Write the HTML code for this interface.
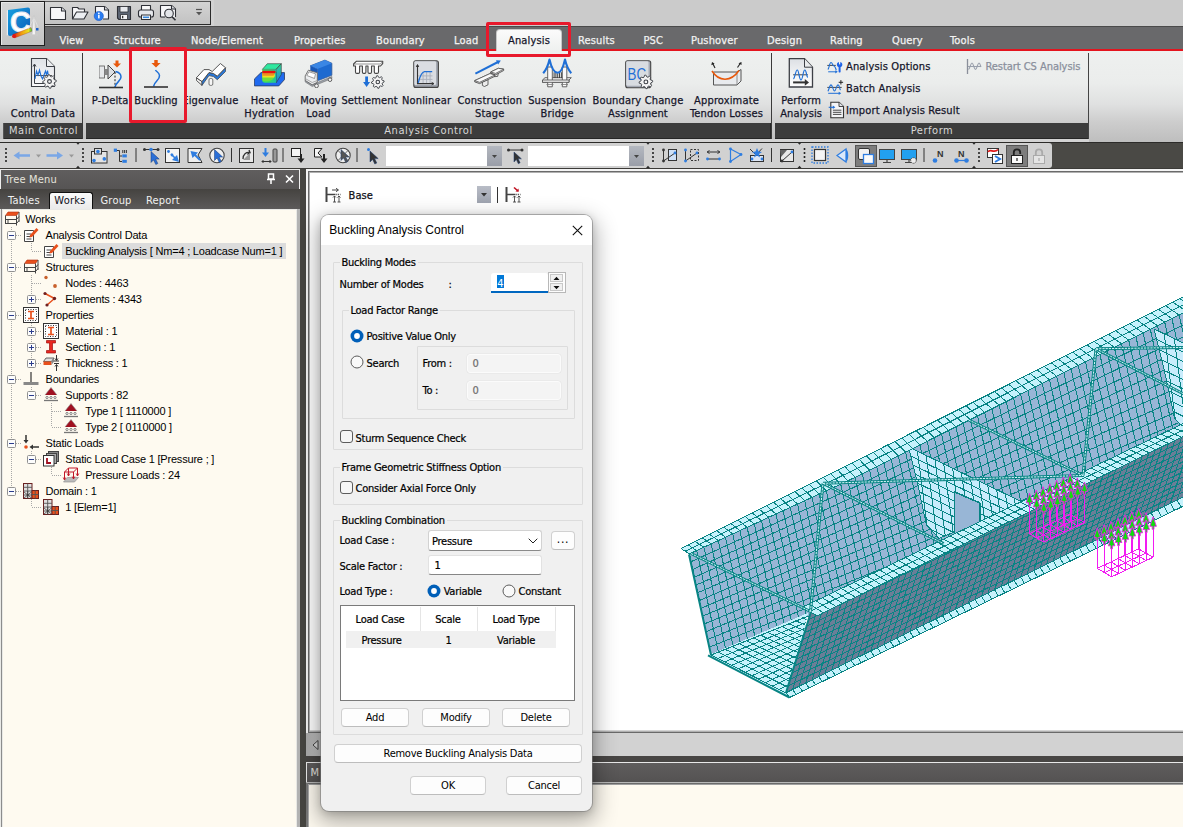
<!DOCTYPE html><html><head><meta charset="utf-8"><title>Buckling Analysis Control</title><style>html,body{margin:0;padding:0;}
body{width:1183px;height:827px;overflow:hidden;background:#cacaca;font-family:"DejaVu Sans Condensed","DejaVu Sans","Liberation Sans",sans-serif;font-size:11px;color:#111;}
#app{position:relative;width:1183px;height:827px;overflow:hidden;}
.abs{position:absolute;}
#app div,#app span,#app svg{position:absolute;box-sizing:border-box;}
.t{white-space:nowrap;line-height:13px;}
.rb{-webkit-text-stroke:0.25px currentColor;font-size:11px;letter-spacing:0.15px;color:#15152a;text-align:center;white-space:nowrap;line-height:13px;}
.tab{-webkit-text-stroke:0.25px currentColor;font-size:11px;letter-spacing:0.15px;color:#f2f2f2;white-space:nowrap;line-height:13px;top:34px;}
.glabel{font-size:11px;letter-spacing:0.55px;color:#d8d8d8;white-space:nowrap;line-height:13px;text-align:center;}
.tr{font-family:"Liberation Sans",sans-serif;font-size:11px;letter-spacing:-0.2px;color:#000;white-space:nowrap;line-height:16px;height:16px;}
.dl{-webkit-text-stroke:0.2px currentColor;font-size:11px;letter-spacing:-0.25px;color:#000;white-space:nowrap;line-height:13px;}
.gb{border:1px solid #dcdcdc;border-radius:1px;}
.gbl{background:#f0f0f0;padding:0 2px;}
.btn{background:#fdfdfd;border:1px solid #d0d0d0;border-bottom-color:#bdbdbd;border-radius:4px;text-align:center;font-size:11px;letter-spacing:-0.25px;color:#000;line-height:16px;}
</style></head><body>
<div id="app">
<div style="left:0;top:0;width:1183px;height:26px;background:#cbcbcb"></div>
<div style="left:0;top:26px;width:1183px;height:23px;background:#69696b;border-top:1px solid #4a4a4a"></div>
<div style="left:44px;top:1px;width:167px;height:24px;background:linear-gradient(#d4d4d4,#c2c2c2);border:1px solid #2a2a2a;border-top-color:#555;border-left:none"></div>
<div style="left:211px;top:0;width:3px;height:26px;background:#d2d2d2"></div>
<div style="left:0;top:1px;width:45px;height:45px;background:linear-gradient(#d6d6d6,#c4c4c4);border:1px solid #1e1e1e;box-shadow:inset 1px 1px 0 #e8e8e8"></div>
<svg style="left:6px;top:7px" width="34" height="32" viewBox="0 0 34 32" ><defs><linearGradient id="glogo" x1="0" y1="0" x2="1" y2="1"><stop offset="0" stop-color="#18a0e0"/><stop offset="1" stop-color="#0c5cb8"/></linearGradient><linearGradient id="gbar" x1="0" y1="0" x2="1" y2="0"><stop offset="0" stop-color="#e01818"/><stop offset="0.45" stop-color="#f0a010"/><stop offset="0.8" stop-color="#e8e020"/><stop offset="1" stop-color="#28b040"/></linearGradient></defs><path d="M2,3 L22,0.5 Q24,0.5 24,2.5 V24 L4,29 Q2,29 2,27 Z" fill="url(#glogo)"/><path d="M0.8,3.5 L2,3 V28 L0.8,28.5 Z" fill="#e8eef4"/><text x="4" y="24.5" font-family="Liberation Sans,sans-serif" font-weight="bold" font-size="29" fill="#fff" stroke="#e4e8f0" stroke-width="1">C</text><path d="M7,27.5 L25,20.5 L26.5,24 L8.5,31 Z" fill="url(#gbar)" stroke="#a02010" stroke-width="0.3"/><circle cx="8" cy="29.2" r="1.9" fill="#e01818"/><path d="M27.5,9 L26,28 H29.5 L28.5,9 Z" fill="#f4f4f4" stroke="#bbb" stroke-width="0.5"/><path d="M24,28 H32" stroke="#ccc" stroke-width="1"/><path d="M27.5,12 L22,22 M28.5,12 L32,20" stroke="#e4e4e4" stroke-width="0.7"/><rect x="30" y="21" width="2.5" height="2.5" fill="#1a60c8"/></svg>
<svg style="left:0px;top:0px" width="215" height="26" viewBox="0 0 215 26" ><g fill="#f7f7f9" stroke="#2e3036" stroke-width="1.1" stroke-linejoin="round"><path d="M50.5,7.5 H61.5 L65.5,11 V19.5 H50.5 Z"/><path d="M61.5,7.5 V11 H65.5" fill="#dfe1e6"/><path d="M72.5,19 V7.5 H77.5 L79,9 H84.5 V12"/><path d="M72.5,19 L76.5,12 H88 L84,19 Z" fill="#eceef2"/><path d="M95.5,17 V6.5 H104.5 L108.5,10 V19 H103"/><path d="M104.5,6.5 V10 H108.5" fill="#dfe1e6"/></g><circle cx="98.8" cy="16" r="4.6" fill="#2a7cf0" stroke="#1858c8" stroke-width="0.6"/><rect x="98.1" y="14.8" width="1.5" height="3.6" fill="#fff"/><circle cx="98.85" cy="13.3" r="0.9" fill="#fff"/><g stroke="#2e3036" stroke-width="1.1" stroke-linejoin="round"><path d="M117.5,6.5 H130.5 V19.5 H119 L117.5,18 Z" fill="#5d6675"/><rect x="120" y="6.5" width="8" height="5.5" fill="#e8eaee" stroke-width="0.8"/><rect x="120.5" y="14.5" width="7" height="5" fill="#f4f4f6" stroke-width="0.8"/><rect x="122" y="15.8" width="1.3" height="2.5" fill="#333" stroke="none"/><path d="M141.5,10 V5.5 H150.5 V10" fill="#fafafa"/><rect x="138.5" y="10" width="15" height="7" rx="2" fill="#e6e8ec"/><path d="M141.5,15 H150.5 V19.5 H141.5 Z" fill="#fafafa"/><path d="M143,17.3 H149" stroke="#3a8ae0" stroke-width="1.6"/><path d="M160.5,17 V5.5 H171.5 L175.5,9 V17" fill="#f7f7f9"/><path d="M160.5,17 H165" /><path d="M171.5,5.5 V9 H175.5" fill="#dfe1e6"/><circle cx="169" cy="13.5" r="4.3" fill="#e4e6ea"/><path d="M172,16.8 L175.5,20.3" stroke-width="1.6"/></g><path d="M196,9.5 H202" stroke="#555" stroke-width="1.2"/><path d="M196,12 H202 L199,15.2 Z" fill="#555"/></svg>
<span class="tab" style="left:59.5px">View</span>
<span class="tab" style="left:113.5px">Structure</span>
<span class="tab" style="left:191px">Node/Element</span>
<span class="tab" style="left:294px">Properties</span>
<span class="tab" style="left:376px">Boundary</span>
<span class="tab" style="left:454px">Load</span>
<span class="tab" style="left:578px">Results</span>
<span class="tab" style="left:643.5px">PSC</span>
<span class="tab" style="left:691px">Pushover</span>
<span class="tab" style="left:767px">Design</span>
<span class="tab" style="left:830px">Rating</span>
<span class="tab" style="left:892px">Query</span>
<span class="tab" style="left:950px">Tools</span>
<div style="left:0;top:49px;width:1183px;height:2px;background:#e4141e"></div>
<div style="left:0;top:51px;width:1183px;height:91px;background:linear-gradient(#eef0ef 0%,#ebedec 35%,#e0e1e1 58%,#cdcdcd 78%,#bebebe 100%)"></div>
<div style="left:0;top:141.500px;width:1183px;height:1.200px;background:#2c2b29"></div>
<div style="left:496px;top:29px;width:66px;height:22px;background:linear-gradient(#fbfbfb,#eef0ef);border:1px solid #c8c8c8;border-bottom:none;border-radius:4px 4px 0 0"></div>
<span class="tab" style="left:508px;color:#15152a">Analysis</span>
<div style="left:0;top:139px;width:1089px;height:2.500px;background:#d3d3d3"></div>
<div style="left:4px;top:123px;width:79px;height:16px;background:#3c3c3c;border-bottom:1px solid #262626;border-right:1px solid #262626"></div>
<div style="left:86px;top:123px;width:685px;height:16px;background:#3c3c3c;border-bottom:1px solid #262626;border-right:1px solid #262626"></div>
<div style="left:775px;top:123px;width:314px;height:16px;background:#3c3c3c;border-bottom:1px solid #262626;border-right:1px solid #262626"></div>
<div style="left:82px;top:53px;width:1px;height:86px;background:#3a3a3a"></div>
<div style="left:771px;top:53px;width:1px;height:86px;background:#3a3a3a"></div>
<div style="left:1088px;top:53px;width:1px;height:86px;background:#444"></div>
<div style="left:3px;top:123px;width:1px;height:16px;background:#555"></div>
<span class="glabel" style="left:4px;top:124px;width:79px">Main Control</span>
<span class="glabel" style="left:86px;top:124px;width:685px">Analysis Control</span>
<span class="glabel" style="left:775px;top:124px;width:314px">Perform</span>
<span class="rb" style="left:-17px;top:94px;width:120px">Main</span>
<span class="rb" style="left:-17px;top:107px;width:120px">Control Data</span>
<svg style="left:30px;top:56.5px" width="28" height="32" viewBox="0 0 28 32" ><defs><linearGradient id="gdoc" x1="0" y1="0" x2="0" y2="1"><stop offset="0" stop-color="#dfe2e6"/><stop offset="1" stop-color="#fbfbfc"/></linearGradient></defs><path d="M1.5,1.5 H16.5 L24.5,9.5 V29.5 H1.5 Z" fill="url(#gdoc)" stroke="#3c3f45" stroke-width="1.1"/><path d="M16.5,1.5 V9.5 H24.5" fill="#eceef0" stroke="#3c3f45" stroke-width="1"/><path d="M4.5,8 V26.5 H14" fill="none" stroke="#3c3f45" stroke-width="1"/><path d="M3,9.5 L4.5,7 L6,9.5" fill="none" stroke="#3c3f45"/><path d="M5,18.5 H22" stroke="#555" stroke-width="1"/><path d="M5,22 L6.5,14 L8,18 L9.5,13 L11,19 L12.5,22 L14,18 L15.5,14 L16.5,18 L17.5,13.5 L18.5,19" fill="none" stroke="#1f6fd6" stroke-width="1.1"/><polygon points="26.17,23.17 26.30,24.50 24.44,25.48 24.15,26.43 25.15,28.28 24.31,29.31 22.30,28.68 21.43,29.15 20.83,31.17 19.50,31.30 18.52,29.44 17.57,29.15 15.72,30.15 14.69,29.31 15.32,27.30 14.85,26.43 12.83,25.83 12.70,24.50 14.56,23.52 14.85,22.57 13.85,20.72 14.69,19.69 16.70,20.32 17.57,19.85 18.17,17.83 19.50,17.70 20.48,19.56 21.43,19.85 23.28,18.85 24.31,19.69 23.68,21.70 24.15,22.57" fill="#f4f4f4" stroke="#3c3f45" stroke-width="0.9"/><circle cx="19.5" cy="24.5" r="1.904" fill="none" stroke="#3c3f45" stroke-width="1.1"/></svg>
<span class="rb" style="left:50.2px;top:94px;width:120px">P-Delta</span>
<svg style="left:99px;top:59.5px" width="24" height="29" viewBox="0 0 24 29" ><rect x="0" y="6" width="5.5" height="12" fill="#e6e8ea" stroke="#555" stroke-width="0.8"/><rect x="5.5" y="9" width="3" height="6" fill="#888"/><path d="M9,5 L16,12 L9,19 Z" fill="#dcdfe2" stroke="#444" stroke-width="1"/><path d="M16.5,0.5 h3 v3 h2.5 l-4,4 l-4,-4 h2.5 z" fill="#e8590c"/><path d="M16,12 V27" stroke="#222" stroke-width="1" stroke-dasharray="2,1.6"/><path d="M16,27 C17,22 22,21 22,17 C22,13 19,12 16.5,11.5" fill="none" stroke="#1f6fd6" stroke-width="1.5"/><path d="M0,27.5 H24" stroke="#333" stroke-width="1.6"/></svg>
<span class="rb" style="left:96px;top:94px;width:120px">Buckling</span>
<svg style="left:144px;top:59.5px" width="24" height="29" viewBox="0 0 24 29" ><path d="M10.275,-0.5 h3.45 v3.45 h2.875 l-4.6,4.6 l-4.6,-4.6 h2.875 z" fill="#e8590c"/><path d="M9.5,26.5 C10.5,21 16,20 15.5,15.5 C15,12 12.5,12 11.5,10" fill="none" stroke="#1f6fd6" stroke-width="1.5"/><path d="M0,27 H24" stroke="#333" stroke-width="1.6"/></svg>
<div style="left:186.500px;top:94px;width:52px;height:14px;overflow:hidden"><span class="rb" style="right:0;top:0">Eigenvalue</span></div>
<svg style="left:196px;top:63px" width="31" height="23" viewBox="0 0 31 23" ><path d="M0.4,14.8 V17.4 L6,22.4 V18.5 Z" fill="#f4f4f4" stroke="#444" stroke-width="0.9"/><path d="M6,18.5 L13,9.5 L17.5,10.5 L21.3,13.2 L29.5,4.7 V8.5 L21.3,16.7 L17.5,13.6 L13,12.6 L6,22.4 Z" fill="#2a78d8" stroke="#444" stroke-width="0.7"/><rect x="13" y="15.5" width="3.8" height="6.9" rx="1.4" fill="#f6f6f6" stroke="#555" stroke-width="0.8"/><path d="M0.4,14.8 L7.9,6.6 L13,6.6 L16.2,8.5 L24.4,0.5 L29.5,4.7 L21.3,13.2 L17.5,10.5 L13,9.5 L6,18.5 Z" fill="#fff" stroke="#444" stroke-width="0.9"/></svg>
<span class="rb" style="left:209.3px;top:94px;width:120px">Heat of</span>
<span class="rb" style="left:209.3px;top:107px;width:120px">Hydration</span>
<svg style="left:254px;top:62.5px" width="31" height="24" viewBox="0 0 31 24" ><defs><linearGradient id="gheat" x1="0" y1="0" x2="1" y2="0"><stop offset="0" stop-color="#38e060"/><stop offset="0.6" stop-color="#30d870"/><stop offset="1" stop-color="#20c0a0"/></linearGradient><linearGradient id="gheat2" x1="0" y1="0" x2="0" y2="1"><stop offset="0" stop-color="#30d890"/><stop offset="1" stop-color="#2080e0"/></linearGradient></defs><path d="M0.4,16 L7,9.6 H30.5 V16.6 L24.8,22.9 H0.4 Z" fill="#1f6af0" stroke="#2a3a60" stroke-width="0.8"/><path d="M8.3,6.4 L13.3,0.7 H27.3 L22.2,6.4 Z" fill="#30e8a0" stroke="#333" stroke-width="0.6"/><path d="M22.2,6.4 L27.3,0.7 V11.5 L22.2,19.8 Z" fill="url(#gheat2)" stroke="#333" stroke-width="0.6"/><path d="M8.3,6.4 H22.2 V19.8 H11 Q8.3,19.8 8.3,17 Z" fill="url(#gheat)"/><path d="M8.3,10.2 H20.5 Q21.5,12.5 20,14.7 H8.3 Z" fill="#f0e020"/><path d="M8.3,10.2 H20 Q20.5,11.5 19.500,12.700 H8.3 Z" fill="#f09020"/><path d="M8.3,7.7 H21.2 Q22.2,9 21.2,10.2 H8.3 Z" fill="#e81010"/><path d="M8.3,14.7 H20 Q18,18 12,18.500 L8.300,17.500 Z" fill="#80e030" opacity="0.8"/></svg>
<span class="rb" style="left:258.5px;top:94px;width:120px">Moving</span>
<span class="rb" style="left:258.5px;top:107px;width:120px">Load</span>
<svg style="left:303.5px;top:59px" width="30" height="29" viewBox="0 0 30 29" ><path d="M1.2,21 L8.2,25.5 L14.6,23 L27.9,17.500 V19.500 L14.600,25 L8.200,27.500 L1.200,23 Z" fill="#9aa0a8" stroke="#666" stroke-width="0.500"/><path d="M6.3,6.8 L20.9,1.1 L27.9,4.2 V16.3 L14.6,21.4 L13.3,21 V9.9 Z" fill="#1d6ad0" stroke="#3a5a90" stroke-width="0.700"/><path d="M6.3,6.8 L20.9,1.1 L27.9,4.2 L13.3,9.9 Z" fill="#3a86e4"/><path d="M6.3,6.8 L13.3,9.9 V14 L6.300,12 Z" fill="#1858b8"/><path d="M1.2,16.9 L4.4,11.2 L13.3,13.8 V23.3 L8.2,25.8 L1.2,21.4 Z" fill="#eceef0" stroke="#666" stroke-width="0.900"/><path d="M2.800,16.500 L5,12.800 L11.500,14.800 L10.500,19.500 Z" fill="#fff" stroke="#777" stroke-width="0.700"/><path d="M1.200,19.500 L8.200,23.500 L13.300,21.500" fill="none" stroke="#999" stroke-width="0.800"/><circle cx="12.500" cy="26.800" r="1.900" fill="#f4f4f4" stroke="#555" stroke-width="0.900"/><circle cx="26" cy="20.700" r="1.800" fill="#f4f4f4" stroke="#555" stroke-width="0.900"/></svg>
<span class="rb" style="left:309.6px;top:94px;width:120px">Settlement</span>
<svg style="left:353px;top:59.5px" width="32" height="29" viewBox="0 0 32 29" ><path d="M0.6,4 L3.5,1.2 H29.7 V3.6 L27.5,6 H25.5 V12 Q25.5,13.4 24,13.4 H22.800 Q21.300,13.400 21.300,12 V6 H18.500 V12 Q18.500,13.400 17.200,13.400 H16.300 Q15,13.400 15,12 V6 H12.900 V12 Q12.900,13.400 11.600,13.400 H10.700 Q9.400,13.400 9.400,12 V6 H6.600 V12 Q6.600,13.400 5.300,13.400 H3.800 Q2.500,13.400 2.500,12 V6 H0.600 Z" fill="#fff" stroke="#444" stroke-width="1.1" stroke-linejoin="round"/><path d="M0.600,4 H27.500 L29.700,1.400" fill="none" stroke="#666" stroke-width="0.700"/><path d="M12.200,16.400 h2.800 v5.500 h2.100 l-3.500,5 l-3.500,-5 h2.100 z" fill="#1f6fd6"/><polygon points="30.98,20.77 31.10,22.00 29.37,22.91 29.11,23.78 30.04,25.50 29.25,26.45 27.39,25.88 26.58,26.31 26.03,28.18 24.80,28.30 23.89,26.57 23.02,26.31 21.30,27.24 20.35,26.45 20.92,24.59 20.49,23.78 18.62,23.23 18.50,22.00 20.23,21.09 20.49,20.22 19.56,18.50 20.35,17.55 22.21,18.12 23.02,17.69 23.57,15.82 24.80,15.70 25.71,17.43 26.58,17.69 28.30,16.76 29.25,17.55 28.68,19.41 29.11,20.22" fill="#f4f4f4" stroke="#3c3f45" stroke-width="0.9"/><circle cx="24.8" cy="22" r="1.764" fill="none" stroke="#3c3f45" stroke-width="1.1"/></svg>
<span class="rb" style="left:366.6px;top:94px;width:120px">Nonlinear</span>
<svg style="left:413px;top:60px" width="26" height="28" viewBox="0 0 26 28" ><rect x="0.8" y="0.8" width="24.6" height="26.6" rx="2" fill="#9ea3ad" stroke="#444" stroke-width="1.1"/><rect x="1.300" y="1.300" width="21.800" height="23.800" rx="1.300" fill="#dadde2"/><path d="M10.1,11.700 V23.600 M13.600,11.700 V23.600 M17.100,11.700 V23.600 M4.500,15.900 H19.500 M4.500,19.400 H19.500" stroke="#aab0bc" stroke-width="0.900"/><path d="M4.500,5 V23.600 H20.600" fill="none" stroke="#333" stroke-width="1.100"/><path d="M3.200,7 L4.500,4.500 L5.800,7 M18.600,22.300 L21,23.600 L18.600,24.900" fill="none" stroke="#333" stroke-width="0.900"/><path d="M5.200,22.900 C7,16 8.500,12 11.500,11.700 H19.200" fill="none" stroke="#1f6fd6" stroke-width="1.300"/></svg>
<span class="rb" style="left:429.8px;top:94px;width:120px">Construction</span>
<span class="rb" style="left:429.8px;top:107px;width:120px">Stage</span>
<svg style="left:474px;top:59.5px" width="31" height="27" viewBox="0 0 31 27" ><path d="M1.400,13.600 L24,2" stroke="#1f6fd6" stroke-width="2"/><path d="M22,0.300 L26.800,0.600 L24.200,4.500 Z" fill="#1f6fd6"/><path d="M19.500,14.300 L24.400,12.900 L23.700,16.400 L20.200,16.700 Z" fill="#e8e8e8" stroke="#444" stroke-width="0.800"/><path d="M16.700,12 L24.400,8.300 L29.700,9.200 V10.500 L21.600,14.800 L16.700,13.200 Z" fill="#dcdcdc" stroke="#444" stroke-width="0.800"/><path d="M16.700,12 L24.400,8.300 L29.700,9.200 L21.600,13.400 Z" fill="#fafafa" stroke="#444" stroke-width="0.700"/><path d="M8.400,22 L14,19.500 V24.800 L10.500,26.500 L8.400,25.500 Z" fill="#ececec" stroke="#444" stroke-width="0.800"/><path d="M0.700,20.600 L16,13.600 L20.900,15 V16.300 L5.600,23.600 L0.700,21.900 Z" fill="#dcdcdc" stroke="#444" stroke-width="0.800"/><path d="M0.700,20.600 L16,13.600 L20.900,15 L5.600,22.300 Z" fill="#fafafa" stroke="#444" stroke-width="0.700"/></svg>
<span class="rb" style="left:497.2px;top:94px;width:120px">Suspension</span>
<span class="rb" style="left:497.2px;top:107px;width:120px">Bridge</span>
<svg style="left:542px;top:58px" width="30" height="30" viewBox="0 0 30 30" ><path d="M0.500,22 L3,19.700 H29.300 L27,22 V24.300 H0.500 Z" fill="#f2f2f2" stroke="#555" stroke-width="0.900"/><path d="M12.100,14.300 V20 M13.900,15 V20 M15.700,15.300 V20 M17.500,15 V20 M19.400,14.300 V20" stroke="#333" stroke-width="0.900"/><path d="M5.700,9 H10.300 V28.800 H5.700 Z M20.300,9 H24.800 V28.800 H20.300 Z" fill="#fafafa" stroke="#555" stroke-width="0.900"/><path d="M0.500,22 H27 V24.300 H0.500 Z" fill="#f6f6f6" stroke="#555" stroke-width="0.900"/><path d="M4.500,26.500 H11.500 M19,26.500 H26" stroke="#777" stroke-width="0.800"/><path d="M1.200,15.200 C4,12 6.500,6 7.500,1.500 C9,8 11.500,14.800 15.700,14.800 C19.500,14.800 21.500,8 23,1.500 C24,6 26.500,12 29.300,15.200" fill="none" stroke="#1f6fd6" stroke-width="2.100" stroke-linejoin="round"/></svg>
<span class="rb" style="left:578px;top:94px;width:120px">Boundary Change</span>
<span class="rb" style="left:578px;top:107px;width:120px">Assignment</span>
<svg style="left:625px;top:60px" width="29" height="30" viewBox="0 0 29 30" ><rect x="0.700" y="0.700" width="25" height="27" rx="2" fill="#a4a9b3" stroke="#444" stroke-width="1.100"/><rect x="1.200" y="1.200" width="22.300" height="24.500" rx="1.300" fill="#d8dce1"/><text x="2.500" y="19.600" font-family="Liberation Sans,sans-serif" font-size="16.500" textLength="18.500" lengthAdjust="spacingAndGlyphs" fill="#1f6fd6">BC</text><polygon points="27.57,20.57 27.70,21.90 25.84,22.88 25.55,23.83 26.55,25.68 25.71,26.71 23.70,26.08 22.83,26.55 22.23,28.57 20.90,28.70 19.92,26.84 18.97,26.55 17.12,27.55 16.09,26.71 16.72,24.70 16.25,23.83 14.23,23.23 14.10,21.90 15.96,20.92 16.25,19.97 15.25,18.12 16.09,17.09 18.10,17.72 18.97,17.25 19.57,15.23 20.90,15.10 21.88,16.96 22.83,17.25 24.68,16.25 25.71,17.09 25.08,19.10 25.55,19.97" fill="#f4f4f4" stroke="#3c3f45" stroke-width="0.9"/><circle cx="20.9" cy="21.9" r="1.904" fill="none" stroke="#3c3f45" stroke-width="1.1"/></svg>
<span class="rb" style="left:666.5px;top:94px;width:120px">Approximate</span>
<span class="rb" style="left:666.5px;top:107px;width:120px">Tendon Losses</span>
<svg style="left:711px;top:62px" width="32" height="24" viewBox="0 0 32 24" ><path d="M2.5,10 H26 L30,7.5 V19 L26,23 H2.5 Z" fill="#e9ebee" stroke="#555" stroke-width="1"/><path d="M26,10 V23" stroke="#777" stroke-width="0.8"/><path d="M1,9 C8,20 20,20 28,8.5" fill="none" stroke="#e8590c" stroke-width="1.6"/><path d="M4,6 L1.5,1" stroke="#222" stroke-width="1.1"/><path d="M0.3,3.3 L1,0 L3.6,1.8 Z" fill="#222"/><path d="M26.5,5.5 L29.5,1" stroke="#222" stroke-width="1.1"/><path d="M27.5,1.2 L30.5,0 L30.5,3 Z" fill="#222"/></svg>
<span class="rb" style="left:741.2px;top:94px;width:120px">Perform</span>
<span class="rb" style="left:741.2px;top:107px;width:120px">Analysis</span>
<svg style="left:788px;top:57.5px" width="26" height="30" viewBox="0 0 26 30" ><defs><linearGradient id="gdoc2" x1="0" y1="0" x2="0" y2="1"><stop offset="0" stop-color="#dcdfe4"/><stop offset="0.600" stop-color="#f4f5f6"/><stop offset="1" stop-color="#fcfcfc"/></linearGradient></defs><path d="M1.300,0.700 H16.500 L24.500,9.200 V29 H1.300 Z" fill="url(#gdoc2)" stroke="#3c3f45" stroke-width="1.300"/><path d="M16.500,0.700 V9.200 H24.500" fill="#e8eaec" stroke="#3c3f45" stroke-width="1"/><path d="M5.100,16.800 H19.900" stroke="#333" stroke-width="0.900"/><path d="M5.500,21 C7,20 7.500,12 9.300,12 C11,12 11,22 13,22 C14.800,22 15,12 16.800,12 C18.500,12 18.500,19 19.800,19.500" fill="none" stroke="#1f6fd6" stroke-width="1.200"/><path d="M5.100,24.400 H18" stroke="#333" stroke-width="2"/><path d="M16.800,21 L21,24.400 L16.800,27.800 Z" fill="#333"/></svg>
<svg style="left:826px;top:57px" width="18" height="18" viewBox="0 0 18 18" ><path d="M1.300,8.400 H9.800" stroke="#333" stroke-width="0.900"/><path d="M1.800,12.600 C3,12 3.500,5.500 5,5.500 C6.500,5.500 6.500,9 8,9 C9.500,9 9.500,12.500 10.500,13" fill="none" stroke="#1f6fd6" stroke-width="1.100"/><path d="M2.200,14.800 H10" stroke="#1f6fd6" stroke-width="1"/><path d="M9.300,13.200 L11.800,14.800 L9.300,16.400 Z" fill="#1f6fd6"/><circle cx="13.600" cy="7.600" r="2.700" fill="#1f63e8"/><rect x="12.600" y="8" width="2" height="7.400" rx="0.600" fill="#1f63e8"/><rect x="13" y="4.600" width="1.200" height="2.800" fill="#eef0ef"/></svg>
<span class="rb" style="left:846px;top:60px;text-align:left">Analysis Options</span>
<svg style="left:826px;top:78px" width="18" height="18" viewBox="0 0 18 18" ><path d="M1.300,9.400 H15.700" stroke="#333" stroke-width="0.900"/><path d="M1.800,13.200 C3,12.500 3.500,6.900 5,6.900 C6.500,6.900 7,13 8.500,13 C10,13 10.500,6.900 12,6.900 C13.500,6.900 13.500,11 14.500,12" fill="none" stroke="#1f6fd6" stroke-width="1.100"/><path d="M12.700,4.300 h4.400 M14.900,2.100 v4.400" stroke="#222" stroke-width="1"/><path d="M2.200,15.300 H13.500" stroke="#1f6fd6" stroke-width="1"/><path d="M12.700,13.700 L15.200,15.300 L12.700,16.900Z" fill="#1f6fd6"/></svg>
<span class="rb" style="left:846px;top:81.5px;text-align:left">Batch Analysis</span>
<svg style="left:826.5px;top:100px" width="18" height="19" viewBox="0 0 18 19" ><path d="M3.800,2.200 H12 L16.500,6.500 V17.800 H3.800 Z" fill="#f4f5f7" stroke="#333" stroke-width="1.100"/><path d="M12,2.200 V6.500 H16.500" fill="#e2e4e8" stroke="#333" stroke-width="0.900"/><path d="M5.900,10.200 H14.400 M5.900,12.300 H14.400 M5.900,14.400 H14.400" stroke="#333" stroke-width="0.900"/><path d="M1.700,7.300 H6.500" stroke="#1f6fd6" stroke-width="1.100"/><path d="M5.800,5.500 L8.300,7.300 L5.800,9.100 Z" fill="#1f6fd6"/></svg>
<span class="rb" style="left:846px;top:103.5px;text-align:left">Import Analysis Result</span>
<svg style="left:966px;top:57px" width="18" height="18" viewBox="0 0 18 18" ><path d="M1.500,2 V17" stroke="#8a8f9a" stroke-width="1.300"/><path d="M2,9.500 H15" stroke="#9aa0ac" stroke-width="1"/><path d="M2.500,12.500 C4,12 4.500,6 6,6 C7.500,6 8,12.500 9.500,12.500 C11,12.500 11.500,6 13,6 C14,6 14.500,9 15,10" fill="none" stroke="#9aa0ac" stroke-width="1.100"/></svg>
<span class="rb" style="left:985.500px;top:60px;text-align:left;letter-spacing:-0.050px;color:#8a8f9c">Restart CS Analysis</span>
<div style="left:485.500px;top:22px;width:85.500px;height:34.500px;border:3.2px solid #e8192c;border-radius:2px"></div>
<div style="left:128.5px;top:47px;width:58.5px;height:76px;border:3.2px solid #e8192c;border-radius:2px"></div>
<div style="left:0;top:142.500px;width:1183px;height:25.500px;background:#4a4945"></div>
<div style="left:0;top:142.500px;width:1052px;height:25.500px;background:#d1d1d1;border-radius:0 3px 3px 0"></div>
<div style="left:0;top:168px;width:1183px;height:1px;background:#3c3b38"></div>
<div style="left:0;top:169px;width:1183px;height:1px;background:#e8e8e8"></div>
<div style="left:386px;top:146px;width:116px;height:20px;background:#fff"></div>
<div style="left:487px;top:146px;width:15px;height:20px;background:linear-gradient(#b4b8c0,#9a9ea8)"></div>
<div style="left:528px;top:146px;width:116px;height:20px;background:#fff"></div>
<div style="left:629px;top:146px;width:15px;height:20px;background:linear-gradient(#b4b8c0,#9a9ea8)"></div>
<div style="left:855px;top:145px;width:22px;height:22px;background:#7d7d7d;border:1px solid #555"></div>
<div style="left:1006px;top:145px;width:22px;height:22px;background:#7d7d7d;border:1px solid #555"></div>
<svg style="left:0px;top:140px" width="1183" height="30" viewBox="0 140 1183 30" ><path d="M6,148 v2 M6,152 v2 M6,156 v2 M6,160 v2" stroke="#222" stroke-width="1.6"/><path d="M83,148 v2 M83,152 v2 M83,156 v2 M83,160 v2" stroke="#222" stroke-width="1.6"/><path d="M653,148 v2 M653,152 v2 M653,156 v2 M653,160 v2" stroke="#222" stroke-width="1.6"/><path d="M804.5,148 v2 M804.5,152 v2 M804.5,156 v2 M804.5,160 v2" stroke="#222" stroke-width="1.6"/><path d="M979,148 v2 M979,152 v2 M979,156 v2 M979,160 v2" stroke="#222" stroke-width="1.6"/><path d="M76,142.500 h4 l-2,2.200 z M76,168 h4 l-2,-2.200 z" fill="#2a2a2a"/><path d="M646,142.500 h4 l-2,2.200 z M646,168 h4 l-2,-2.200 z" fill="#2a2a2a"/><path d="M797.5,142.500 h4 l-2,2.200 z M797.5,168 h4 l-2,-2.200 z" fill="#2a2a2a"/><path d="M972,142.500 h4 l-2,2.200 z M972,168 h4 l-2,-2.200 z" fill="#2a2a2a"/><path d="M136,148 V162" stroke="#333" stroke-width="1"/><path d="M231.5,148 V162" stroke="#333" stroke-width="1"/><path d="M283,148 V162" stroke="#333" stroke-width="1"/><path d="M357,148 V162" stroke="#333" stroke-width="1"/><path d="M771.5,148 V162" stroke="#333" stroke-width="1"/><path d="M924,148 V162" stroke="#333" stroke-width="1"/><path d="M13.500,155.500 L19.500,151.500 V154.200 H30 V156.800 H19.500 V159.500 Z" fill="#7aa7e6"/><path d="M36,154.5 h5 l-2.5,3 z" fill="#999"/><path d="M63,155.500 L57,151.500 V154.200 H46.500 V156.800 H57 V159.500 Z" fill="#7aa7e6"/><path d="M69,154.5 h5 l-2.5,3 z" fill="#999"/><rect x="91.500" y="151.500" width="15.500" height="11.500" fill="#e4e4e4" stroke="#333"/><rect x="94.500" y="148.500" width="7" height="5.500" fill="#dcdcdc" stroke="#333"/><circle cx="97.900" cy="151.600" r="1.800" fill="#2f7de0"/><circle cx="94" cy="160.600" r="1.800" fill="#2f7de0"/><circle cx="104.300" cy="158.900" r="1.800" fill="#2f7de0"/><path d="M117,150.500 H119.500 V161.500 H122 M119.500,156 H122" stroke="#333" fill="none"/><rect x="113.800" y="148.600" width="3.200" height="3.200" fill="#2f7de0"/><path d="M122.800,150 v3 M124.600,150 v3 M126.400,150 v3" stroke="#222" stroke-width="0.900"/><rect x="122.300" y="154.400" width="4.500" height="3" fill="#2f7de0"/><rect x="122.300" y="159.800" width="4.500" height="3" fill="#2f7de0"/><path d="M144,149.5 H158" stroke="#333"/><circle cx="144.5" cy="149.5" r="1.5" fill="#333"/><circle cx="158" cy="149.5" r="1.5" fill="#333"/><circle cx="151" cy="149.5" r="1.8" fill="#2f7de0"/><path d="M151,151.5 l0,11 l2.6,-2.6 l2.2,4.6 l2,-1 l-2.2,-4.4 l3.6,0 z" fill="#2a6fd8" stroke="#1a3a70" stroke-width="0.5"/><rect x="165.5" y="148.5" width="14" height="14" fill="#f4f4f4" stroke="#333"/><circle cx="168.5" cy="151.5" r="1.4" fill="#2f7de0"/><circle cx="172" cy="155" r="1.4" fill="#2f7de0"/><path d="M179,162 L172,160 L177,155 Z" fill="#2f7de0"/><path d="M171,154 L177,160" stroke="#2f7de0" stroke-width="1.6"/><path d="M188,148.5 H202 L198,155 L202,162.5 H188 Z" fill="#eee" stroke="#333"/><path d="M190.5,151 L198,152.5 L192.5,158 Z" fill="#2f7de0"/><path d="M194,154 L200,160" stroke="#2f7de0" stroke-width="2"/><circle cx="217" cy="155.5" r="7.2" fill="#f0f0f0" stroke="#444" stroke-width="1.1"/><path d="M214.5,149.5 l0,11 l2.6,-2.6 l2.2,4.6 l2,-1 l-2.2,-4.4 l3.6,0 z" fill="#2a6fd8" stroke="#1a3a70" stroke-width="0.5"/><rect x="239.5" y="148.5" width="14" height="14" fill="#e8e8e8" stroke="#333"/><path d="M243,159 C243,154 246,152 250,152.5 L249,150 M250,152.5 L247.5,154.5" fill="none" stroke="#333" stroke-width="1.3"/><path d="M243,160 L250,153 V160 Z" fill="#999"/><path d="M265.5,148 V153" stroke="#2f7de0" stroke-width="2"/><path d="M262,152.5 H269 L265.5,157 Z" fill="#2f7de0"/><rect x="273" y="149" width="4" height="13" rx="1" fill="#999" stroke="#444"/><path d="M262,161.5 H271" stroke="#333"/><path d="M263.5,160 L262,161.5 L263.5,163 M269.5,160 L271,161.5 L269.5,163" stroke="#333" fill="none"/><rect x="291.5" y="148.500" width="9" height="8" fill="#f4f4f4" stroke="#222"/><path d="M301,154 V160" stroke="#222" stroke-width="2"/><path d="M297.5,158.5 H304.5 L301,163 Z" fill="#222"/><path d="M314.500,148.500 H322 L318,153 L322,157 H314.500 Z" fill="#f4f4f4" stroke="#222"/><path d="M324,154 V160" stroke="#222" stroke-width="2"/><path d="M320.5,158.5 H327.5 L324,163 Z" fill="#222"/><circle cx="343" cy="155.500" r="7.200" fill="#eee" stroke="#444" stroke-width="1.1"/><path d="M338,150.5 L348,160.5 M348,150.5 L338,160.5" stroke="#555" stroke-width="0.9"/><path d="M341,149.5 l0,11 l2.6,-2.6 l2.2,4.6 l2,-1 l-2.2,-4.4 l3.6,0 z" fill="#555" stroke="#1a3a70" stroke-width="0.5"/><circle cx="368.5" cy="149.5" r="1.500" fill="#2f7de0"/><path d="M370,151 l0,11 l2.6,-2.6 l2.2,4.6 l2,-1 l-2.2,-4.4 l3.6,0 z" fill="#333" stroke="#1a3a70" stroke-width="0.5"/><path d="M508,150 H522" stroke="#333"/><circle cx="508.500" cy="150" r="1.500" fill="#333"/><circle cx="522" cy="150" r="1.500" fill="#333"/><path d="M514,152 l0,9.9 l2.34,-2.34 l1.98,4.14 l1.8,-0.9 l-1.98,-3.96 l3.24,0 z" fill="#333" stroke="#1a3a70" stroke-width="0.5"/><path d="M492,155 h5 l-2.500,3 z" fill="#444"/><path d="M634,155 h5 l-2.500,3 z" fill="#444"/><rect x="668.500" y="149.500" width="8" height="11" fill="#cfe0f6" stroke="#333"/><path d="M663.500,150 V161 M663.500,161 L675,153" stroke="#333" fill="none"/><circle cx="663.5" cy="150" r="1.400" fill="#333"/><circle cx="663.5" cy="161" r="1.400" fill="#333"/><circle cx="675" cy="153" r="1.400" fill="#2f7de0"/><rect x="690.500" y="149.500" width="8" height="11" fill="none" stroke="#333" stroke-dasharray="2,1.500"/><path d="M685.500,150 V161 M685.500,161 L697,153" stroke="#333" fill="none"/><circle cx="685.5" cy="150" r="1.400" fill="#2f7de0"/><circle cx="685.5" cy="161" r="1.400" fill="#2f7de0"/><circle cx="697" cy="153" r="1.400" fill="#2f7de0"/><path d="M708,152 H719 M708,159 H719" stroke="#333" stroke-width="1.2"/><path d="M709.500,150.500 L707,152 L709.500,153.500 M717.500,150.500 L720,152 L717.500,153.500" stroke="#333" fill="none"/><circle cx="707.5" cy="159" r="1.400" fill="#2f7de0"/><circle cx="719.5" cy="159" r="1.400" fill="#2f7de0"/><path d="M730.500,149 V161.500 L741,154.500 Z" fill="none" stroke="#2f7de0" stroke-width="1.2"/><circle cx="730.5" cy="149" r="1.400" fill="#2f7de0"/><circle cx="730.5" cy="161.5" r="1.400" fill="#2f7de0"/><circle cx="741" cy="154.5" r="1.400" fill="#2f7de0"/><rect x="750.500" y="155.500" width="13" height="6" fill="#dde6f4" stroke="#333"/><path d="M750,149 L756,155 M762,148.500 L756,155" stroke="#333"/><path d="M757,148 L758.500,151.500 L762,152 L759,154 L760,157.500 L757,155.500 L754,157.500 L755,154 L752,152 L755.500,151.500 Z" fill="#2f7de0"/><circle cx="752" cy="159" r="1.400" fill="#2f7de0"/><circle cx="762" cy="159" r="1.400" fill="#2f7de0"/><rect x="780.500" y="149.500" width="13" height="12" fill="#e8e8e8" stroke="#333"/><path d="M780,150 L787,150 L781,157 Z" fill="#666"/><path d="M782,161 L792,152" stroke="#333"/><circle cx="792" cy="152" r="1.400" fill="#2f7de0"/><circle cx="782" cy="161" r="1.400" fill="#333"/><rect x="814.500" y="149.500" width="11" height="11" fill="#f4f4f4" stroke="#333" stroke-width="1.2"/><rect x="812" y="147" width="16" height="16" fill="none" stroke="#2f7de0" stroke-dasharray="1.500,1.500" stroke-width="1.300"/><path d="M837,155.500 L846,149 V162 Z" fill="#dbe8fa" stroke="#2f7de0" stroke-width="1.200"/><path d="M846,149 C849,151 849,160 846,162 Z" fill="#2f7de0"/><rect x="858.500" y="148.500" width="11" height="11" rx="1.500" fill="#f2f2f2" stroke="#333"/><rect x="863.500" y="154.500" width="10" height="9" fill="#fafafa" stroke="#2f7de0" stroke-width="1.300"/><rect x="879.5" y="149.500" width="15" height="10" fill="#22a0f0" stroke="#444"/><path d="M887,160 v2 M883,162.500 h8" stroke="#444" stroke-width="1.200"/><rect x="901.5" y="149.500" width="15" height="10" fill="#22a0f0" stroke="#444"/><path d="M909,160 v2 M905,162.500 h8" stroke="#444" stroke-width="1.200"/><circle cx="913.500" cy="160.500" r="2.800" fill="#eee" stroke="#444" stroke-dasharray="1.200,0.800"/><text x="937" y="157" font-family="Liberation Sans,sans-serif" font-weight="bold" font-size="9" fill="#333">N</text><circle cx="935" cy="160.500" r="2.300" fill="#2f7de0"/><text x="958" y="157" font-family="Liberation Sans,sans-serif" font-weight="bold" font-size="9" fill="#333">N</text><path d="M957,160.500 H966" stroke="#2f7de0" stroke-width="1.200"/><circle cx="956.500" cy="160.500" r="2.300" fill="#2f7de0"/><circle cx="966.500" cy="160.500" r="2.300" fill="#2f7de0"/><rect x="987.500" y="148.500" width="11" height="9" fill="#fff" stroke="#333"/><path d="M988,152 C990,148 994,154 998,149.500" fill="none" stroke="#e01818" stroke-width="1.600"/><rect x="992.500" y="154.500" width="10" height="9" fill="#fff" stroke="#333"/><path d="M995,156 L1000,159 L995,162" fill="none" stroke="#2f7de0" stroke-width="2"/><path d="M1013.8,156 V152.500 a3.200,3.200 0 0 1 6.400,0 V154" fill="none" stroke="#222" stroke-width="1.800"/><rect x="1011.5" y="155.500" width="11" height="8" fill="#fafafa" stroke="#222"/><path d="M1017,158 v3" stroke="#222" stroke-width="1.200"/><path d="M1035.8,156 V152.500 a3.200,3.200 0 0 1 6.400,0 V156" fill="none" stroke="#aaa" stroke-width="1.800"/><rect x="1033.5" y="155.500" width="11" height="8" fill="#e4e4e4" stroke="#aaa"/><path d="M1039,158 v3" stroke="#aaa" stroke-width="1.200"/></svg>
<div style="left:0;top:170px;width:300px;height:657px;background:#4a4845"></div>
<div style="left:300px;top:169px;width:6px;height:658px;background:#464541"></div>
<div style="left:0;top:170px;width:300px;height:19px;background:linear-gradient(#605e5e,#565454);border-left:1px solid #eee;border-right:1px solid #eee"></div>
<span class="t" style="left:4.5px;top:172.5px;color:#e6e4dc;font-size:11px;letter-spacing:0.2px">Tree Menu</span>
<svg style="left:264px;top:172px" width="34" height="14" viewBox="0 0 34 14" ><path d="M4.500,2 H9.500 V7 H4.500 Z M3,7.500 H11 M7,7.500 V12" fill="none" stroke="#fff" stroke-width="1.500"/><path d="M22,3.500 L29,10.500 M29,3.500 L22,10.500" stroke="#fff" stroke-width="1.600"/></svg>
<div style="left:0;top:189px;width:300px;height:20px;background:linear-gradient(#454340,#5c5a5a)"></div>
<div style="left:48.500px;top:192px;width:44.500px;height:18px;background:linear-gradient(#fbfbfb,#e9e9e9);border:1px solid #111;border-bottom:none;border-radius:3px 3px 0 0"></div>
<span class="t" style="left:8px;top:193.500px;color:#f0f0f0;font-size:11px;letter-spacing:0.2px">Tables</span>
<span class="t" style="left:54.3px;top:193.500px;color:#101020;font-size:11px;letter-spacing:0.2px">Works</span>
<span class="t" style="left:100.5px;top:193.500px;color:#f0f0f0;font-size:11px;letter-spacing:0.2px">Group</span>
<span class="t" style="left:146px;top:193.500px;color:#f0f0f0;font-size:11px;letter-spacing:0.2px">Report</span>
<div style="left:0;top:209px;width:300px;height:618px;background:#b4b4b4"></div>
<div style="left:0;top:209px;width:297px;height:618px;background:#e9e9e6"></div>
<div style="left:3px;top:210px;width:293px;height:617px;background:#fefaf0"></div>
<div style="left:1px;top:209px;width:1px;height:618px;background:#8c8c8c"></div>
<div style="left:62px;top:243px;width:224px;height:16px;background:#dcdcdc"></div>
<span class="tr" style="left:25.3px;top:210.5px">Works</span>
<span class="tr" style="left:45.5px;top:226.5px">Analysis Control Data</span>
<span class="tr" style="left:65.3px;top:242.5px">Buckling Analysis [ Nm=4 ; Loadcase Num=1 ]</span>
<span class="tr" style="left:45.5px;top:258.5px">Structures</span>
<span class="tr" style="left:65.3px;top:274.5px">Nodes : 4463</span>
<span class="tr" style="left:65.3px;top:290.5px">Elements : 4343</span>
<span class="tr" style="left:45.5px;top:306.5px">Properties</span>
<span class="tr" style="left:65.3px;top:322.5px">Material : 1</span>
<span class="tr" style="left:65.3px;top:338.5px">Section : 1</span>
<span class="tr" style="left:65.3px;top:354.5px">Thickness : 1</span>
<span class="tr" style="left:45.5px;top:370.5px">Boundaries</span>
<span class="tr" style="left:65.3px;top:386.5px">Supports : 82</span>
<span class="tr" style="left:85.2px;top:402.5px">Type 1 [ 1110000 ]</span>
<span class="tr" style="left:85.2px;top:418.5px">Type 2 [ 0110000 ]</span>
<span class="tr" style="left:45.5px;top:434.5px">Static Loads</span>
<span class="tr" style="left:65.3px;top:450.5px">Static Load Case 1 [Pressure ; ]</span>
<span class="tr" style="left:85.2px;top:466.5px">Pressure Loads : 24</span>
<span class="tr" style="left:45.5px;top:482.5px">Domain : 1</span>
<span class="tr" style="left:65.3px;top:498.5px">1 [Elem=1]</span>
<svg style="left:0px;top:209px" width="300" height="320" viewBox="0 209 300 320" ><path d="M11.500,227 V491" stroke="#a8a8a8" stroke-width="1" stroke-dasharray="1,1" fill="none" shape-rendering="crispEdges"/><path d="M31.500,243 V251" stroke="#a8a8a8" stroke-width="1" stroke-dasharray="1,1" fill="none" shape-rendering="crispEdges"/><path d="M31.500,275 V299" stroke="#a8a8a8" stroke-width="1" stroke-dasharray="1,1" fill="none" shape-rendering="crispEdges"/><path d="M31.500,323 V363" stroke="#a8a8a8" stroke-width="1" stroke-dasharray="1,1" fill="none" shape-rendering="crispEdges"/><path d="M31.500,387 V395" stroke="#a8a8a8" stroke-width="1" stroke-dasharray="1,1" fill="none" shape-rendering="crispEdges"/><path d="M51.500,403 V427" stroke="#a8a8a8" stroke-width="1" stroke-dasharray="1,1" fill="none" shape-rendering="crispEdges"/><path d="M31.500,451 V459" stroke="#a8a8a8" stroke-width="1" stroke-dasharray="1,1" fill="none" shape-rendering="crispEdges"/><path d="M51.500,467 V475" stroke="#a8a8a8" stroke-width="1" stroke-dasharray="1,1" fill="none" shape-rendering="crispEdges"/><path d="M31.500,499 V507" stroke="#a8a8a8" stroke-width="1" stroke-dasharray="1,1" fill="none" shape-rendering="crispEdges"/><g transform="translate(4,211)"><path d="M1.500,4.500 L4,1 H15 L12.500,4.500 Z" fill="#e8501c" stroke="#b03010" stroke-width="0.600"/><path d="M1.500,4.500 V13 M12.500,4.500 V14.500 M15,1 V11 M1.500,8.500 H12.500 L15,5.500 M1.500,12.500 H12.500 L15,9.500 M4,8.500 V12" stroke="#444" fill="none" stroke-width="1"/></g><path d="M11.5,235.500 H22" stroke="#a8a8a8" stroke-width="1" stroke-dasharray="1,1" fill="none" shape-rendering="crispEdges"/><rect x="7.5" y="231.5" width="8" height="8" rx="1" fill="#fcfcfc" stroke="#919191"/><path d="M9,235.5 h5" stroke="#2b3c8c" stroke-width="1"/><g transform="translate(23,227)"><path d="M1.500,3.500 H10.500 V14.500 H1.500 Z" fill="#fff" stroke="#444"/><path d="M3.500,7 H8.500 M3.500,9.500 H8.500 M3.500,12 H8.500" stroke="#444"/><path d="M7,8 L13.500,1 L15.500,3 L9,10 L6.500,10.500 Z" fill="#e8501c"/></g><path d="M31.5,251.500 H42" stroke="#a8a8a8" stroke-width="1" stroke-dasharray="1,1" fill="none" shape-rendering="crispEdges"/><g transform="translate(43,243)"><path d="M1.500,3.500 H10.500 V14.500 H1.500 Z" fill="#fff" stroke="#444"/><path d="M3.500,7 H8.500 M3.500,9.500 H8.500 M3.500,12 H8.500" stroke="#444"/><path d="M7,8 L13.500,1 L15.500,3 L9,10 L6.500,10.500 Z" fill="#e8501c"/></g><path d="M11.5,267.500 H22" stroke="#a8a8a8" stroke-width="1" stroke-dasharray="1,1" fill="none" shape-rendering="crispEdges"/><rect x="7.5" y="263.5" width="8" height="8" rx="1" fill="#fcfcfc" stroke="#919191"/><path d="M9,267.5 h5" stroke="#2b3c8c" stroke-width="1"/><g transform="translate(23,259)"><path d="M1.500,4.500 L4,1 H15 L12.500,4.500 Z" fill="#e8501c" stroke="#b03010" stroke-width="0.600"/><path d="M1.500,4.500 V13 M12.500,4.500 V14.500 M15,1 V11 M1.500,8.500 H12.500 L15,5.500 M1.500,12.500 H12.500 L15,9.500 M4,8.500 V12" stroke="#444" fill="none" stroke-width="1"/></g><path d="M31.5,283.500 H42" stroke="#a8a8a8" stroke-width="1" stroke-dasharray="1,1" fill="none" shape-rendering="crispEdges"/><g transform="translate(43,275)"><circle cx="3" cy="2.500" r="1.700" fill="#c8602c"/><circle cx="12" cy="11" r="1.900" fill="#c8602c"/></g><path d="M31.5,299.500 H42" stroke="#a8a8a8" stroke-width="1" stroke-dasharray="1,1" fill="none" shape-rendering="crispEdges"/><rect x="27.5" y="295.5" width="8" height="8" rx="1" fill="#fcfcfc" stroke="#919191"/><path d="M29,299.5 h5" stroke="#2b3c8c" stroke-width="1"/><path d="M31.5,297 v5" stroke="#2b3c8c" stroke-width="1"/><g transform="translate(43,291)"><path d="M2,2.500 L11.500,7.500 L4,14" fill="none" stroke="#e8501c" stroke-width="1.500"/><circle cx="2" cy="2.500" r="1.600" fill="#702020"/><circle cx="11.500" cy="7.500" r="1.700" fill="#702020"/><circle cx="4" cy="14" r="1.600" fill="#702020"/></g><path d="M11.5,315.500 H22" stroke="#a8a8a8" stroke-width="1" stroke-dasharray="1,1" fill="none" shape-rendering="crispEdges"/><rect x="7.5" y="311.5" width="8" height="8" rx="1" fill="#fcfcfc" stroke="#919191"/><path d="M9,315.5 h5" stroke="#2b3c8c" stroke-width="1"/><g transform="translate(23,307)"><rect x="0.500" y="0.500" width="15" height="15" fill="#fff" stroke="#333"/><rect x="2.500" y="2.500" width="11" height="11" fill="none" stroke="#333" stroke-dasharray="1,1.500" stroke-width="1"/><path d="M5,4.500 H11 M8,4.500 V11.500 M5,11.500 H11" stroke="#e8501c" stroke-width="1.700"/></g><path d="M31.5,331.500 H42" stroke="#a8a8a8" stroke-width="1" stroke-dasharray="1,1" fill="none" shape-rendering="crispEdges"/><rect x="27.5" y="327.5" width="8" height="8" rx="1" fill="#fcfcfc" stroke="#919191"/><path d="M29,331.5 h5" stroke="#2b3c8c" stroke-width="1"/><path d="M31.5,329 v5" stroke="#2b3c8c" stroke-width="1"/><g transform="translate(43,323)"><rect x="0.500" y="0.500" width="15" height="15" fill="#fff" stroke="#333"/><rect x="2.500" y="2.500" width="11" height="11" fill="none" stroke="#333" stroke-dasharray="1,1.500" stroke-width="1"/><path d="M5,4.500 H11 M8,4.500 V11.500 M5,11.500 H11" stroke="#e8501c" stroke-width="1.700"/></g><path d="M31.5,347.500 H42" stroke="#a8a8a8" stroke-width="1" stroke-dasharray="1,1" fill="none" shape-rendering="crispEdges"/><rect x="27.5" y="343.5" width="8" height="8" rx="1" fill="#fcfcfc" stroke="#919191"/><path d="M29,347.5 h5" stroke="#2b3c8c" stroke-width="1"/><path d="M31.5,345 v5" stroke="#2b3c8c" stroke-width="1"/><g transform="translate(43,339)"><path d="M3.500,1.500 H12.500 V4 H9.500 V11.500 H12.500 V14 H3.500 V11.500 H6.500 V4 H3.500 Z" fill="#e82820" stroke="#a01010" stroke-width="0.700"/></g><path d="M31.5,363.500 H42" stroke="#a8a8a8" stroke-width="1" stroke-dasharray="1,1" fill="none" shape-rendering="crispEdges"/><rect x="27.5" y="359.5" width="8" height="8" rx="1" fill="#fcfcfc" stroke="#919191"/><path d="M29,363.5 h5" stroke="#2b3c8c" stroke-width="1"/><path d="M31.5,361 v5" stroke="#2b3c8c" stroke-width="1"/><g transform="translate(43,355)"><path d="M0.500,6.500 L3,3 H11 L8.500,6.500 Z" fill="#ddd" stroke="#444" stroke-width="0.800"/><path d="M0.500,6.500 H8.500 V10 H0.500 Z" fill="#e8501c"/><path d="M8.500,6.500 L11,3 V6.500 L8.500,10 Z" fill="#888"/><path d="M11,6 H16 M11,8.500 H16 M13.500,0 V5 M13.500,16 V10" stroke="#333" stroke-width="1"/><path d="M12,3.500 L13.500,5.500 L15,3.500 M12,11.500 L13.500,9.500 L15,11.500" stroke="#333" fill="none"/></g><path d="M11.5,379.500 H22" stroke="#a8a8a8" stroke-width="1" stroke-dasharray="1,1" fill="none" shape-rendering="crispEdges"/><rect x="7.5" y="375.5" width="8" height="8" rx="1" fill="#fcfcfc" stroke="#919191"/><path d="M9,379.5 h5" stroke="#2b3c8c" stroke-width="1"/><g transform="translate(23,371)"><path d="M8,1 V11" stroke="#333" stroke-width="1.200"/><path d="M0.500,12.500 H15.500" stroke="#888" stroke-width="3"/></g><path d="M31.5,395.500 H42" stroke="#a8a8a8" stroke-width="1" stroke-dasharray="1,1" fill="none" shape-rendering="crispEdges"/><rect x="27.5" y="391.5" width="8" height="8" rx="1" fill="#fcfcfc" stroke="#919191"/><path d="M29,395.5 h5" stroke="#2b3c8c" stroke-width="1"/><g transform="translate(43,387)"><path d="M8,0.500 L14,8 H2 Z" fill="#a01020"/><path d="M2,8 L8,0.500 L14,8" fill="none" stroke="#888" stroke-width="0.600"/><circle cx="4" cy="10.500" r="1.100" fill="#fff" stroke="#555" stroke-width="0.700"/><circle cx="8" cy="10.500" r="1.100" fill="#fff" stroke="#555" stroke-width="0.700"/><circle cx="12" cy="10.500" r="1.100" fill="#fff" stroke="#555" stroke-width="0.700"/><path d="M1,13.500 H15" stroke="#777" stroke-width="1.300"/></g><path d="M51.5,411.500 H62" stroke="#a8a8a8" stroke-width="1" stroke-dasharray="1,1" fill="none" shape-rendering="crispEdges"/><g transform="translate(63,403)"><path d="M8,0.500 L14,8 H2 Z" fill="#a01020"/><path d="M2,8 L8,0.500 L14,8" fill="none" stroke="#888" stroke-width="0.600"/><circle cx="4" cy="10.500" r="1.100" fill="#fff" stroke="#555" stroke-width="0.700"/><circle cx="8" cy="10.500" r="1.100" fill="#fff" stroke="#555" stroke-width="0.700"/><circle cx="12" cy="10.500" r="1.100" fill="#fff" stroke="#555" stroke-width="0.700"/><path d="M1,13.500 H15" stroke="#777" stroke-width="1.300"/></g><path d="M51.5,427.500 H62" stroke="#a8a8a8" stroke-width="1" stroke-dasharray="1,1" fill="none" shape-rendering="crispEdges"/><g transform="translate(63,419)"><path d="M8,0.500 L14,8 H2 Z" fill="#a01020"/><path d="M2,8 L8,0.500 L14,8" fill="none" stroke="#888" stroke-width="0.600"/><circle cx="4" cy="10.500" r="1.100" fill="#fff" stroke="#555" stroke-width="0.700"/><circle cx="8" cy="10.500" r="1.100" fill="#fff" stroke="#555" stroke-width="0.700"/><circle cx="12" cy="10.500" r="1.100" fill="#fff" stroke="#555" stroke-width="0.700"/><path d="M1,13.500 H15" stroke="#777" stroke-width="1.300"/></g><path d="M11.5,443.500 H22" stroke="#a8a8a8" stroke-width="1" stroke-dasharray="1,1" fill="none" shape-rendering="crispEdges"/><rect x="7.5" y="439.5" width="8" height="8" rx="1" fill="#fcfcfc" stroke="#919191"/><path d="M9,443.5 h5" stroke="#2b3c8c" stroke-width="1"/><g transform="translate(23,435)"><path d="M3,0 V6" stroke="#333" stroke-width="1.500"/><path d="M0.500,5 H5.500 L3,8.500 Z" fill="#333"/><circle cx="3" cy="12" r="1.800" fill="#e8501c"/><path d="M16,12 H9" stroke="#333" stroke-width="1.500"/><path d="M10,9.500 V14.500 L6.500,12 Z" fill="#333"/></g><path d="M31.5,459.500 H42" stroke="#a8a8a8" stroke-width="1" stroke-dasharray="1,1" fill="none" shape-rendering="crispEdges"/><rect x="27.5" y="455.5" width="8" height="8" rx="1" fill="#fcfcfc" stroke="#919191"/><path d="M29,459.5 h5" stroke="#2b3c8c" stroke-width="1"/><g transform="translate(43,451)"><rect x="5.500" y="0.500" width="10" height="10" fill="#888" stroke="#444"/><rect x="3.500" y="2.500" width="10" height="10" fill="#aaa" stroke="#444"/><rect x="0.500" y="4.500" width="10.500" height="10.500" fill="#fff" stroke="#333"/><path d="M4,7 V12 H8" stroke="#a01020" stroke-width="1.800" fill="none"/></g><path d="M51.5,475.500 H62" stroke="#a8a8a8" stroke-width="1" stroke-dasharray="1,1" fill="none" shape-rendering="crispEdges"/><g transform="translate(63,467)"><path d="M0.500,15 L4.500,10.500 H15.500 L11.500,15 Z" fill="#bbb" stroke="#888" stroke-width="0.600"/><path d="M1.500,13 V5 L5.500,1 H14.500 V9 M1.500,5 H10.500 L14.500,1 M10.500,5 V12 M5.500,1 V9" fill="none" stroke="#c01828" stroke-width="1"/><path d="M0.200,10.500 L1.500,13 L2.800,10.500 M9.200,9.500 L10.500,12 L11.800,9.500 M13.200,6.500 L14.500,9 L15.800,6.500 M4.200,6.500 L5.500,9 L6.800,6.500" fill="none" stroke="#c01828" stroke-width="0.900"/></g><path d="M11.5,491.500 H22" stroke="#a8a8a8" stroke-width="1" stroke-dasharray="1,1" fill="none" shape-rendering="crispEdges"/><rect x="7.5" y="487.5" width="8" height="8" rx="1" fill="#fcfcfc" stroke="#919191"/><path d="M9,491.5 h5" stroke="#2b3c8c" stroke-width="1"/><g transform="translate(23,483)"><rect x="0.500" y="0.500" width="8.500" height="15" fill="#e0e0e0" stroke="#6a2020" stroke-width="1"/><rect x="9" y="7.500" width="6.500" height="8" fill="#e8501c" stroke="#6a2020"/><path d="M4.700,0.500 V15.500 M0.500,4.300 H9 M0.500,8 H9 M12.200,7.500 V15.500 M9,11.500 H15.500" stroke="#555" stroke-width="0.900"/><path d="M1,9 L8.500,15 M8.500,9 L1,15 M4.700,8 V15.500 M0.500,12 H9" stroke="#333" stroke-width="0.700"/></g><path d="M31.5,507.500 H42" stroke="#a8a8a8" stroke-width="1" stroke-dasharray="1,1" fill="none" shape-rendering="crispEdges"/><g transform="translate(43,499)"><rect x="0.500" y="0.500" width="8.500" height="15" fill="#e0e0e0" stroke="#6a2020" stroke-width="1"/><rect x="9" y="7.500" width="6.500" height="8" fill="#e8501c" stroke="#6a2020"/><path d="M4.700,0.500 V15.500 M0.500,4.300 H9 M0.500,8 H9 M12.200,7.500 V15.500 M9,11.500 H15.500" stroke="#555" stroke-width="0.900"/><path d="M1,9 L8.500,15 M8.500,9 L1,15 M4.700,8 V15.500 M0.500,12 H9" stroke="#333" stroke-width="0.700"/></g></svg>
<div style="left:306px;top:169px;width:877px;height:658px;background:#484644"></div>
<div style="left:306px;top:169px;width:877px;height:564px;background:#f4f4f4"></div>
<div style="left:307.500px;top:170.500px;width:876px;height:562px;background:#6a6a6a"></div>
<div style="left:309px;top:172px;width:875px;height:560px;background:#b0b0b0"></div>
<div style="left:310px;top:173px;width:873px;height:558px;background:#fff"></div>
<div style="left:310px;top:729.500px;width:873px;height:1.200px;background:#d4d4d4"></div>
<div style="left:306px;top:732.500px;width:877px;height:23.500px;background:#d2d2d2"></div>
<div style="left:306px;top:733px;width:16px;height:23px;background:linear-gradient(90deg,#aaa,#c8c8c8)"></div>
<svg style="left:309px;top:738px" width="12" height="14" viewBox="0 0 12 14" ><path d="M9,2.500 L4,7 L9,11.500 Z" fill="#ddd" stroke="#444" stroke-width="1"/></svg>
<div style="left:306px;top:762px;width:877px;height:1px;background:#e8e8e8"></div>
<div style="left:306px;top:763px;width:877px;height:19px;background:linear-gradient(#5f5d5d,#545252)"></div>
<div style="left:306px;top:762px;width:1px;height:21px;background:#e8e8e8"></div>
<span class="t" style="left:310.500px;top:766px;color:#e8e6e0;font-size:11px;letter-spacing:3px">Message Window</span>
<div style="left:306px;top:782px;width:877px;height:1px;background:#b8b8b8"></div>
<div style="left:306px;top:783px;width:877px;height:1px;background:#6a6a6a"></div>
<div style="left:306px;top:784px;width:877px;height:1px;background:#a0a0a0"></div>
<div style="left:309px;top:785px;width:874px;height:42px;background:#fefaf0"></div>
<div style="left:306px;top:783px;width:1.500px;height:44px;background:#777"></div>
<div style="left:307.500px;top:784px;width:1.500px;height:43px;background:#aaa"></div>
<svg style="left:323.5px;top:186px" width="20" height="18" viewBox="0 0 20 18" ><path d="M2.500,1 V16" stroke="#444" stroke-width="2"/><path d="M3,8.500 H11" stroke="#444" stroke-width="1.500"/><path d="M8,4 H14" stroke="#444" stroke-width="1"/><path d="M12,2.300 L14.500,4 L12,5.700" fill="none" stroke="#444"/><path d="M11.500,8.500 h5" stroke="#444" stroke-width="1.300" stroke-dasharray="1.200,1"/><path d="M10.500,10 V16 M15,10 V16 M9,11.500 L10.500,10 L12,11.500 M13.500,11.500 L15,10 L16.500,11.500 M9,16 H12 M13.500,16 H16.500" stroke="#444" fill="none" stroke-width="0.900"/></svg>
<span class="t" style="left:348.500px;top:188.500px;font-size:11px;letter-spacing:0.100px;color:#101018;-webkit-text-stroke:0.25px #101018">Base</span>
<div style="left:477px;top:186px;width:14px;height:17px;background:linear-gradient(#b8bcc6,#9fa4b0)"></div>
<svg style="left:480px;top:192px" width="8" height="6" viewBox="0 0 8 6" ><path d="M1,1 H7 L4,4.500 Z" fill="#333"/></svg>
<div style="left:497px;top:187px;width:1px;height:16px;background:#333"></div>
<svg style="left:504px;top:186px" width="20" height="18" viewBox="0 0 20 18" ><path d="M2.500,1 V16" stroke="#444" stroke-width="2"/><path d="M3,8.500 H11" stroke="#444" stroke-width="1.500"/><path d="M10,1.500 L14,5" stroke="#c01020" stroke-width="1.600"/><path d="M11.500,5.500 L14.800,5.800 L14.500,2.500 Z" fill="#c01020"/><path d="M11.500,8.500 h5" stroke="#444" stroke-width="1.300" stroke-dasharray="1.200,1"/><path d="M10.500,10 V16 M15,10 V16 M9,11.500 L10.500,10 L12,11.500 M13.500,11.500 L15,10 L16.500,11.500 M9,16 H12 M13.500,16 H16.500" stroke="#444" fill="none" stroke-width="0.900"/></svg>
<svg style="left:310px;top:173px" width="873" height="558" viewBox="310 173 873 558"><g stroke-linejoin="round" shape-rendering="crispEdges">
<polygon points="689.5,553.8 696.7,550.5 703.9,547.2 711.1,543.9 718.3,540.6 725.5,537.3 732.7,533.9 739.9,530.6 747.1,527.3 754.3,524.0 761.5,520.7 768.7,517.3 775.9,514.0 783.1,510.7 790.3,507.4 797.5,504.1 804.7,500.8 811.9,497.4 819.1,494.1 826.3,490.8 833.5,487.5 840.7,484.2 847.9,480.8 855.1,477.3 862.3,473.7 869.5,470.1 876.7,466.5 883.9,462.9 891.1,459.3 898.3,455.7 905.5,452.1 912.7,448.5 919.9,444.9 927.1,441.3 934.3,437.6 941.5,434.0 948.7,430.4 955.9,426.8 963.1,423.2 970.3,419.6 977.5,416.0 984.7,412.4 991.9,408.8 999.1,405.2 1006.3,401.6 1013.5,398.0 1020.7,394.3 1027.9,390.7 1035.1,387.1 1042.3,383.5 1049.5,379.9 1056.7,376.3 1063.9,372.7 1071.1,369.1 1078.3,365.5 1085.5,361.9 1092.7,358.3 1099.9,354.6 1107.1,351.0 1114.3,347.4 1121.5,343.8 1128.7,340.2 1135.9,336.6 1143.1,333.0 1150.3,329.4 1157.5,325.8 1164.7,322.2 1171.9,318.6 1179.1,315.0 1186.3,311.3 1193.5,307.7 1200.7,304.1 1207.9,300.5 1215.1,296.9 1222.3,293.3 1229.5,289.7 1236.7,286.1 1269.8,433.2 1262.5,436.2 1255.1,439.1 1247.8,442.0 1240.4,444.9 1233.1,447.8 1225.7,450.7 1218.4,453.7 1211.0,456.6 1203.7,459.5 1196.3,462.4 1189.0,465.3 1181.6,468.3 1174.3,471.2 1166.9,474.1 1159.5,477.0 1152.2,479.9 1144.8,482.8 1137.5,485.8 1130.1,488.7 1122.8,491.6 1115.4,494.5 1108.1,497.4 1100.7,500.3 1093.4,503.3 1086.0,506.2 1078.7,509.1 1071.3,512.0 1064.0,514.9 1056.6,517.9 1049.2,520.8 1041.9,523.7 1034.5,526.6 1027.2,529.5 1019.8,532.4 1012.5,535.4 1005.1,538.3 997.8,541.2 990.4,544.1 983.1,547.0 975.7,550.0 968.4,552.9 961.0,555.8 953.7,558.7 946.3,561.6 938.9,564.5 931.6,567.5 924.2,570.4 916.9,573.3 909.5,576.2 902.2,579.1 894.8,582.1 887.5,585.0 880.1,587.9 872.8,590.8 865.4,593.7 858.1,596.6 850.7,599.6 843.4,602.5 836.0,605.4 828.7,608.3 821.3,611.2 813.9,614.1 806.6,617.1 799.2,620.0 791.9,622.9 784.5,625.8 777.2,628.7 769.8,631.7 762.5,634.6 755.1,637.5 747.8,640.4 740.4,643.3 733.1,646.2 725.7,649.2 718.4,652.1 711.0,655.0" fill="#98b6d6" />
<path d="M689.5,553.8 L696.7,550.5 L703.9,547.2 L711.1,543.9 L718.3,540.6 L725.5,537.3 L732.7,533.9 L739.9,530.6 L747.1,527.3 L754.3,524.0 L761.5,520.7 L768.7,517.3 L775.9,514.0 L783.1,510.7 L790.3,507.4 L797.5,504.1 L804.7,500.8 L811.9,497.4 L819.1,494.1 L826.3,490.8 L833.5,487.5 L840.7,484.2 L847.9,480.8 L855.1,477.3 L862.3,473.7 L869.5,470.1 L876.7,466.5 L883.9,462.9 L891.1,459.3 L898.3,455.7 L905.5,452.1 L912.7,448.5 L919.9,444.9 L927.1,441.3 L934.3,437.6 L941.5,434.0 L948.7,430.4 L955.9,426.8 L963.1,423.2 L970.3,419.6 L977.5,416.0 L984.7,412.4 L991.9,408.8 L999.1,405.2 L1006.3,401.6 L1013.5,398.0 L1020.7,394.3 L1027.9,390.7 L1035.1,387.1 L1042.3,383.5 L1049.5,379.9 L1056.7,376.3 L1063.9,372.7 L1071.1,369.1 L1078.3,365.5 L1085.5,361.9 L1092.7,358.3 L1099.9,354.6 L1107.1,351.0 L1114.3,347.4 L1121.5,343.8 L1128.7,340.2 L1135.9,336.6 L1143.1,333.0 L1150.3,329.4 L1157.5,325.8 L1164.7,322.2 L1171.9,318.6 L1179.1,315.0 L1186.3,311.3 L1193.5,307.7 L1200.7,304.1 L1207.9,300.5 L1215.1,296.9 L1222.3,293.3 L1229.5,289.7 L1236.7,286.1 M691.2,561.6 L698.4,558.3 L705.6,555.0 L712.8,551.8 L720.0,548.5 L727.2,545.2 L734.4,541.9 L741.6,538.6 L748.8,535.3 L756.1,532.0 L763.3,528.7 L770.5,525.5 L777.7,522.2 L784.9,518.9 L792.1,515.6 L799.3,512.3 L806.5,509.0 L813.8,505.7 L821.0,502.5 L828.2,499.2 L835.4,495.9 L842.6,492.6 L849.8,489.3 L857.0,485.8 L864.2,482.3 L871.4,478.7 L878.7,475.2 L885.9,471.6 L893.1,468.1 L900.3,464.5 L907.5,461.0 L914.7,457.4 L921.9,453.8 L929.1,450.3 L936.4,446.7 L943.6,443.2 L950.8,439.6 L958.0,436.1 L965.2,432.5 L972.4,429.0 L979.6,425.4 L986.8,421.8 L994.0,418.3 L1001.3,414.7 L1008.5,411.2 L1015.7,407.6 L1022.9,404.1 L1030.1,400.5 L1037.3,397.0 L1044.5,393.4 L1051.7,389.8 L1059.0,386.3 L1066.2,382.7 L1073.4,379.2 L1080.6,375.6 L1087.8,372.1 L1095.0,368.5 L1102.2,365.0 L1109.4,361.4 L1116.6,357.8 L1123.9,354.3 L1131.1,350.7 L1138.3,347.2 L1145.5,343.6 L1152.7,340.1 L1159.9,336.5 L1167.1,333.0 L1174.3,329.4 L1181.6,325.8 L1188.8,322.3 L1196.0,318.7 L1203.2,315.2 L1210.4,311.6 L1217.6,308.1 L1224.8,304.5 L1232.0,301.0 L1239.2,297.4 M692.8,569.4 L700.0,566.1 L707.3,562.9 L714.5,559.6 L721.7,556.4 L728.9,553.1 L736.1,549.9 L743.4,546.6 L750.6,543.4 L757.8,540.1 L765.0,536.8 L772.3,533.6 L779.5,530.3 L786.7,527.1 L793.9,523.8 L801.2,520.6 L808.4,517.3 L815.6,514.0 L822.8,510.8 L830.1,507.5 L837.3,504.3 L844.5,501.0 L851.7,497.8 L858.9,494.3 L866.2,490.8 L873.4,487.3 L880.6,483.8 L887.8,480.3 L895.1,476.8 L902.3,473.3 L909.5,469.8 L916.7,466.3 L924.0,462.8 L931.2,459.3 L938.4,455.8 L945.6,452.3 L952.9,448.8 L960.1,445.3 L967.3,441.8 L974.5,438.3 L981.8,434.8 L989.0,431.3 L996.2,427.8 L1003.4,424.3 L1010.6,420.8 L1017.9,417.3 L1025.1,413.8 L1032.3,410.3 L1039.5,406.8 L1046.8,403.3 L1054.0,399.8 L1061.2,396.3 L1068.4,392.8 L1075.7,389.3 L1082.9,385.8 L1090.1,382.3 L1097.3,378.8 L1104.6,375.3 L1111.8,371.8 L1119.0,368.3 L1126.2,364.8 L1133.4,361.3 L1140.7,357.8 L1147.9,354.3 L1155.1,350.8 L1162.3,347.2 L1169.6,343.7 L1176.8,340.2 L1184.0,336.7 L1191.2,333.2 L1198.5,329.7 L1205.7,326.2 L1212.9,322.7 L1220.1,319.2 L1227.4,315.7 L1234.6,312.2 L1241.8,308.7 M694.5,577.2 L701.7,574.0 L708.9,570.7 L716.2,567.5 L723.4,564.3 L730.6,561.1 L737.9,557.8 L745.1,554.6 L752.3,551.4 L759.6,548.2 L766.8,544.9 L774.1,541.7 L781.3,538.5 L788.5,535.3 L795.8,532.0 L803.0,528.8 L810.2,525.6 L817.5,522.3 L824.7,519.1 L831.9,515.9 L839.2,512.7 L846.4,509.4 L853.6,506.2 L860.9,502.9 L868.1,499.4 L875.3,496.0 L882.6,492.5 L889.8,489.1 L897.1,485.6 L904.3,482.2 L911.5,478.7 L918.8,475.3 L926.0,471.8 L933.2,468.4 L940.5,464.9 L947.7,461.5 L954.9,458.0 L962.2,454.6 L969.4,451.1 L976.6,447.7 L983.9,444.2 L991.1,440.8 L998.3,437.3 L1005.6,433.9 L1012.8,430.4 L1020.1,427.0 L1027.3,423.5 L1034.5,420.1 L1041.8,416.6 L1049.0,413.2 L1056.2,409.7 L1063.5,406.3 L1070.7,402.8 L1077.9,399.4 L1085.2,395.9 L1092.4,392.5 L1099.6,389.0 L1106.9,385.6 L1114.1,382.1 L1121.3,378.7 L1128.6,375.2 L1135.8,371.8 L1143.1,368.3 L1150.3,364.9 L1157.5,361.4 L1164.8,358.0 L1172.0,354.5 L1179.2,351.1 L1186.5,347.6 L1193.7,344.2 L1200.9,340.7 L1208.2,337.3 L1215.4,333.8 L1222.6,330.4 L1229.9,326.9 L1237.1,323.5 L1244.3,320.0 M696.1,585.0 L703.4,581.8 L710.6,578.6 L717.9,575.4 L725.1,572.2 L732.4,569.0 L739.6,565.8 L746.8,562.6 L754.1,559.4 L761.3,556.2 L768.6,553.0 L775.8,549.8 L783.1,546.6 L790.3,543.4 L797.6,540.2 L804.8,537.0 L812.1,533.8 L819.3,530.7 L826.6,527.5 L833.8,524.3 L841.1,521.1 L848.3,517.9 L855.6,514.7 L862.8,511.4 L870.0,508.0 L877.3,504.6 L884.5,501.2 L891.8,497.8 L899.0,494.4 L906.3,491.0 L913.5,487.6 L920.8,484.2 L928.0,480.8 L935.3,477.4 L942.5,474.0 L949.8,470.6 L957.0,467.2 L964.3,463.8 L971.5,460.4 L978.8,457.0 L986.0,453.6 L993.2,450.2 L1000.5,446.8 L1007.7,443.4 L1015.0,440.0 L1022.2,436.6 L1029.5,433.2 L1036.7,429.8 L1044.0,426.5 L1051.2,423.1 L1058.5,419.7 L1065.7,416.3 L1073.0,412.9 L1080.2,409.5 L1087.5,406.1 L1094.7,402.7 L1102.0,399.3 L1109.2,395.9 L1116.4,392.5 L1123.7,389.1 L1130.9,385.7 L1138.2,382.3 L1145.4,378.9 L1152.7,375.5 L1159.9,372.1 L1167.2,368.7 L1174.4,365.3 L1181.7,361.9 L1188.9,358.5 L1196.2,355.1 L1203.4,351.7 L1210.7,348.3 L1217.9,344.9 L1225.2,341.5 L1232.4,338.2 L1239.7,334.8 L1246.9,331.4 M697.8,592.7 L705.0,589.6 L712.3,586.4 L719.5,583.3 L726.8,580.1 L734.1,576.9 L741.3,573.8 L748.6,570.6 L755.8,567.4 L763.1,564.3 L770.4,561.1 L777.6,557.9 L784.9,554.8 L792.1,551.6 L799.4,548.5 L806.7,545.3 L813.9,542.1 L821.2,539.0 L828.4,535.8 L835.7,532.6 L842.9,529.5 L850.2,526.3 L857.5,523.1 L864.7,519.9 L872.0,516.5 L879.2,513.2 L886.5,509.8 L893.8,506.5 L901.0,503.1 L908.3,499.8 L915.5,496.5 L922.8,493.1 L930.1,489.8 L937.3,486.4 L944.6,483.1 L951.8,479.7 L959.1,476.4 L966.3,473.1 L973.6,469.7 L980.9,466.4 L988.1,463.0 L995.4,459.7 L1002.6,456.3 L1009.9,453.0 L1017.2,449.7 L1024.4,446.3 L1031.7,443.0 L1038.9,439.6 L1046.2,436.3 L1053.5,432.9 L1060.7,429.6 L1068.0,426.3 L1075.2,422.9 L1082.5,419.6 L1089.8,416.2 L1097.0,412.9 L1104.3,409.5 L1111.5,406.2 L1118.8,402.9 L1126.0,399.5 L1133.3,396.2 L1140.6,392.8 L1147.8,389.5 L1155.1,386.1 L1162.3,382.8 L1169.6,379.5 L1176.9,376.1 L1184.1,372.8 L1191.4,369.4 L1198.6,366.1 L1205.9,362.7 L1213.2,359.4 L1220.4,356.1 L1227.7,352.7 L1234.9,349.4 L1242.2,346.0 L1249.4,342.7 M699.4,600.5 L706.7,597.4 L714.0,594.3 L721.2,591.1 L728.5,588.0 L735.8,584.9 L743.0,581.7 L750.3,578.6 L757.6,575.5 L764.9,572.3 L772.1,569.2 L779.4,566.1 L786.7,562.9 L793.9,559.8 L801.2,556.7 L808.5,553.5 L815.8,550.4 L823.0,547.3 L830.3,544.1 L837.6,541.0 L844.8,537.9 L852.1,534.7 L859.4,531.6 L866.6,528.4 L873.9,525.1 L881.2,521.8 L888.5,518.5 L895.7,515.2 L903.0,511.9 L910.3,508.6 L917.5,505.3 L924.8,502.0 L932.1,498.8 L939.4,495.5 L946.6,492.2 L953.9,488.9 L961.2,485.6 L968.4,482.3 L975.7,479.0 L983.0,475.7 L990.3,472.4 L997.5,469.1 L1004.8,465.9 L1012.1,462.6 L1019.3,459.3 L1026.6,456.0 L1033.9,452.7 L1041.1,449.4 L1048.4,446.1 L1055.7,442.8 L1063.0,439.5 L1070.2,436.2 L1077.5,433.0 L1084.8,429.7 L1092.0,426.4 L1099.3,423.1 L1106.6,419.8 L1113.9,416.5 L1121.1,413.2 L1128.4,409.9 L1135.7,406.6 L1142.9,403.3 L1150.2,400.1 L1157.5,396.8 L1164.7,393.5 L1172.0,390.2 L1179.3,386.9 L1186.6,383.6 L1193.8,380.3 L1201.1,377.0 L1208.4,373.7 L1215.6,370.4 L1222.9,367.2 L1230.2,363.9 L1237.5,360.6 L1244.7,357.3 L1252.0,354.0 M701.1,608.3 L708.4,605.2 L715.6,602.1 L722.9,599.0 L730.2,595.9 L737.5,592.8 L744.8,589.7 L752.1,586.6 L759.3,583.5 L766.6,580.4 L773.9,577.3 L781.2,574.2 L788.5,571.1 L795.7,568.0 L803.0,564.9 L810.3,561.8 L817.6,558.7 L824.9,555.6 L832.2,552.5 L839.4,549.4 L846.7,546.3 L854.0,543.2 L861.3,540.1 L868.6,536.9 L875.9,533.6 L883.1,530.4 L890.4,527.2 L897.7,523.9 L905.0,520.7 L912.3,517.4 L919.6,514.2 L926.8,511.0 L934.1,507.7 L941.4,504.5 L948.7,501.3 L956.0,498.0 L963.2,494.8 L970.5,491.6 L977.8,488.3 L985.1,485.1 L992.4,481.8 L999.7,478.6 L1006.9,475.4 L1014.2,472.1 L1021.5,468.9 L1028.8,465.7 L1036.1,462.4 L1043.4,459.2 L1050.6,455.9 L1057.9,452.7 L1065.2,449.5 L1072.5,446.2 L1079.8,443.0 L1087.0,439.8 L1094.3,436.5 L1101.6,433.3 L1108.9,430.1 L1116.2,426.8 L1123.5,423.6 L1130.7,420.3 L1138.0,417.1 L1145.3,413.9 L1152.6,410.6 L1159.9,407.4 L1167.2,404.2 L1174.4,400.9 L1181.7,397.7 L1189.0,394.5 L1196.3,391.2 L1203.6,388.0 L1210.9,384.7 L1218.1,381.5 L1225.4,378.3 L1232.7,375.0 L1240.0,371.8 L1247.3,368.6 L1254.5,365.3 M702.7,616.1 L710.0,613.0 L717.3,609.9 L724.6,606.9 L731.9,603.8 L739.2,600.7 L746.5,597.7 L753.8,594.6 L761.1,591.5 L768.4,588.4 L775.7,585.4 L783.0,582.3 L790.3,579.2 L797.6,576.2 L804.9,573.1 L812.1,570.0 L819.4,566.9 L826.7,563.9 L834.0,560.8 L841.3,557.7 L848.6,554.7 L855.9,551.6 L863.2,548.5 L870.5,545.4 L877.8,542.2 L885.1,539.0 L892.4,535.8 L899.7,532.6 L907.0,529.5 L914.3,526.3 L921.6,523.1 L928.9,519.9 L936.1,516.7 L943.4,513.5 L950.7,510.4 L958.0,507.2 L965.3,504.0 L972.6,500.8 L979.9,497.6 L987.2,494.4 L994.5,491.2 L1001.8,488.1 L1009.1,484.9 L1016.4,481.7 L1023.7,478.5 L1031.0,475.3 L1038.3,472.1 L1045.6,469.0 L1052.9,465.8 L1060.2,462.6 L1067.4,459.4 L1074.7,456.2 L1082.0,453.0 L1089.3,449.9 L1096.6,446.7 L1103.9,443.5 L1111.2,440.3 L1118.5,437.1 L1125.8,433.9 L1133.1,430.8 L1140.4,427.6 L1147.7,424.4 L1155.0,421.2 L1162.3,418.0 L1169.6,414.8 L1176.9,411.7 L1184.2,408.5 L1191.4,405.3 L1198.7,402.1 L1206.0,398.9 L1213.3,395.7 L1220.6,392.6 L1227.9,389.4 L1235.2,386.2 L1242.5,383.0 L1249.8,379.8 L1257.1,376.6 M704.4,623.9 L711.7,620.8 L719.0,617.8 L726.3,614.8 L733.6,611.7 L740.9,608.7 L748.2,605.6 L755.5,602.6 L762.8,599.5 L770.1,596.5 L777.4,593.5 L784.8,590.4 L792.1,587.4 L799.4,584.3 L806.7,581.3 L814.0,578.3 L821.3,575.2 L828.6,572.2 L835.9,569.1 L843.2,566.1 L850.5,563.1 L857.8,560.0 L865.1,557.0 L872.4,553.9 L879.7,550.7 L887.0,547.6 L894.3,544.5 L901.6,541.4 L909.0,538.2 L916.3,535.1 L923.6,532.0 L930.9,528.8 L938.2,525.7 L945.5,522.6 L952.8,519.4 L960.1,516.3 L967.4,513.2 L974.7,510.0 L982.0,506.9 L989.3,503.8 L996.6,500.7 L1003.9,497.5 L1011.2,494.4 L1018.5,491.3 L1025.9,488.1 L1033.2,485.0 L1040.5,481.9 L1047.8,478.7 L1055.1,475.6 L1062.4,472.5 L1069.7,469.4 L1077.0,466.2 L1084.3,463.1 L1091.6,460.0 L1098.9,456.8 L1106.2,453.7 L1113.5,450.6 L1120.8,447.4 L1128.1,444.3 L1135.4,441.2 L1142.7,438.0 L1150.1,434.9 L1157.4,431.8 L1164.7,428.7 L1172.0,425.5 L1179.3,422.4 L1186.6,419.3 L1193.9,416.1 L1201.2,413.0 L1208.5,409.9 L1215.8,406.7 L1223.1,403.6 L1230.4,400.5 L1237.7,397.4 L1245.0,394.2 L1252.3,391.1 L1259.6,388.0 M706.0,631.7 L713.4,628.6 L720.7,625.6 L728.0,622.6 L735.3,619.6 L742.6,616.6 L749.9,613.6 L757.3,610.6 L764.6,607.6 L771.9,604.6 L779.2,601.6 L786.5,598.5 L793.9,595.5 L801.2,592.5 L808.5,589.5 L815.8,586.5 L823.1,583.5 L830.4,580.5 L837.8,577.5 L845.1,574.5 L852.4,571.5 L859.7,568.4 L867.0,565.4 L874.3,562.4 L881.7,559.3 L889.0,556.2 L896.3,553.1 L903.6,550.1 L910.9,547.0 L918.3,543.9 L925.6,540.8 L932.9,537.8 L940.2,534.7 L947.5,531.6 L954.8,528.5 L962.2,525.4 L969.5,522.4 L976.8,519.3 L984.1,516.2 L991.4,513.1 L998.8,510.1 L1006.1,507.0 L1013.4,503.9 L1020.7,500.8 L1028.0,497.8 L1035.3,494.7 L1042.7,491.6 L1050.0,488.5 L1057.3,485.4 L1064.6,482.4 L1071.9,479.3 L1079.2,476.2 L1086.6,473.1 L1093.9,470.1 L1101.2,467.0 L1108.5,463.9 L1115.8,460.8 L1123.2,457.7 L1130.5,454.7 L1137.8,451.6 L1145.1,448.5 L1152.4,445.4 L1159.7,442.4 L1167.1,439.3 L1174.4,436.2 L1181.7,433.1 L1189.0,430.1 L1196.3,427.0 L1203.7,423.9 L1211.0,420.8 L1218.3,417.7 L1225.6,414.7 L1232.9,411.6 L1240.2,408.5 L1247.6,405.4 L1254.9,402.4 L1262.2,399.3 M707.7,639.4 L715.0,636.5 L722.4,633.5 L729.7,630.5 L737.0,627.5 L744.3,624.5 L751.7,621.6 L759.0,618.6 L766.3,615.6 L773.7,612.6 L781.0,609.6 L788.3,606.7 L795.6,603.7 L803.0,600.7 L810.3,597.7 L817.6,594.7 L825.0,591.8 L832.3,588.8 L839.6,585.8 L847.0,582.8 L854.3,579.8 L861.6,576.9 L868.9,573.9 L876.3,570.9 L883.6,567.9 L890.9,564.8 L898.3,561.8 L905.6,558.8 L912.9,555.8 L920.3,552.7 L927.6,549.7 L934.9,546.7 L942.2,543.7 L949.6,540.6 L956.9,537.6 L964.2,534.6 L971.6,531.6 L978.9,528.5 L986.2,525.5 L993.5,522.5 L1000.9,519.5 L1008.2,516.4 L1015.5,513.4 L1022.9,510.4 L1030.2,507.4 L1037.5,504.3 L1044.9,501.3 L1052.2,498.3 L1059.5,495.3 L1066.8,492.3 L1074.2,489.2 L1081.5,486.2 L1088.8,483.2 L1096.2,480.2 L1103.5,477.1 L1110.8,474.1 L1118.2,471.1 L1125.5,468.1 L1132.8,465.0 L1140.1,462.0 L1147.5,459.0 L1154.8,456.0 L1162.1,452.9 L1169.5,449.9 L1176.8,446.9 L1184.1,443.9 L1191.4,440.8 L1198.8,437.8 L1206.1,434.8 L1213.4,431.8 L1220.8,428.7 L1228.1,425.7 L1235.4,422.7 L1242.8,419.7 L1250.1,416.6 L1257.4,413.6 L1264.7,410.6 M709.3,647.2 L716.7,644.3 L724.0,641.3 L731.4,638.4 L738.7,635.4 L746.1,632.5 L753.4,629.5 L760.7,626.6 L768.1,623.6 L775.4,620.7 L782.8,617.7 L790.1,614.8 L797.4,611.8 L804.8,608.9 L812.1,605.9 L819.5,603.0 L826.8,600.0 L834.2,597.1 L841.5,594.1 L848.8,591.2 L856.2,588.2 L863.5,585.3 L870.9,582.3 L878.2,579.4 L885.5,576.4 L892.9,573.4 L900.2,570.5 L907.6,567.5 L914.9,564.5 L922.2,561.6 L929.6,558.6 L936.9,555.6 L944.3,552.6 L951.6,549.7 L959.0,546.7 L966.3,543.7 L973.6,540.8 L981.0,537.8 L988.3,534.8 L995.7,531.8 L1003.0,528.9 L1010.3,525.9 L1017.7,522.9 L1025.0,520.0 L1032.4,517.0 L1039.7,514.0 L1047.1,511.0 L1054.4,508.1 L1061.7,505.1 L1069.1,502.1 L1076.4,499.2 L1083.8,496.2 L1091.1,493.2 L1098.4,490.3 L1105.8,487.3 L1113.1,484.3 L1120.5,481.3 L1127.8,478.4 L1135.1,475.4 L1142.5,472.4 L1149.8,469.5 L1157.2,466.5 L1164.5,463.5 L1171.9,460.5 L1179.2,457.6 L1186.5,454.6 L1193.9,451.6 L1201.2,448.7 L1208.6,445.7 L1215.9,442.7 L1223.2,439.7 L1230.6,436.8 L1237.9,433.8 L1245.3,430.8 L1252.6,427.9 L1260.0,424.9 L1267.3,421.9 M711.0,655.0 L718.4,652.1 L725.7,649.2 L733.1,646.2 L740.4,643.3 L747.8,640.4 L755.1,637.5 L762.5,634.6 L769.8,631.7 L777.2,628.7 L784.5,625.8 L791.9,622.9 L799.2,620.0 L806.6,617.1 L813.9,614.1 L821.3,611.2 L828.7,608.3 L836.0,605.4 L843.4,602.5 L850.7,599.6 L858.1,596.6 L865.4,593.7 L872.8,590.8 L880.1,587.9 L887.5,585.0 L894.8,582.1 L902.2,579.1 L909.5,576.2 L916.9,573.3 L924.2,570.4 L931.6,567.5 L938.9,564.5 L946.3,561.6 L953.7,558.7 L961.0,555.8 L968.4,552.9 L975.7,550.0 L983.1,547.0 L990.4,544.1 L997.8,541.2 L1005.1,538.3 L1012.5,535.4 L1019.8,532.4 L1027.2,529.5 L1034.5,526.6 L1041.9,523.7 L1049.2,520.8 L1056.6,517.9 L1064.0,514.9 L1071.3,512.0 L1078.7,509.1 L1086.0,506.2 L1093.4,503.3 L1100.7,500.3 L1108.1,497.4 L1115.4,494.5 L1122.8,491.6 L1130.1,488.7 L1137.5,485.8 L1144.8,482.8 L1152.2,479.9 L1159.5,477.0 L1166.9,474.1 L1174.3,471.2 L1181.6,468.3 L1189.0,465.3 L1196.3,462.4 L1203.7,459.5 L1211.0,456.6 L1218.4,453.7 L1225.7,450.7 L1233.1,447.8 L1240.4,444.9 L1247.8,442.0 L1255.1,439.1 L1262.5,436.2 L1269.8,433.2 M689.5,553.8 L711.0,655.0 M696.7,550.5 L718.4,652.1 M703.9,547.2 L725.7,649.2 M711.1,543.9 L733.1,646.2 M718.3,540.6 L740.4,643.3 M725.5,537.3 L747.8,640.4 M732.7,533.9 L755.1,637.5 M739.9,530.6 L762.5,634.6 M747.1,527.3 L769.8,631.7 M754.3,524.0 L777.2,628.7 M761.5,520.7 L784.5,625.8 M768.7,517.3 L791.9,622.9 M775.9,514.0 L799.2,620.0 M783.1,510.7 L806.6,617.1 M790.3,507.4 L813.9,614.1 M797.5,504.1 L821.3,611.2 M804.7,500.8 L828.7,608.3 M811.9,497.4 L836.0,605.4 M819.1,494.1 L843.4,602.5 M826.3,490.8 L850.7,599.6 M833.5,487.5 L858.1,596.6 M840.7,484.2 L865.4,593.7 M847.9,480.8 L872.8,590.8 M855.1,477.3 L880.1,587.9 M862.3,473.7 L887.5,585.0 M869.5,470.1 L894.8,582.1 M876.7,466.5 L902.2,579.1 M883.9,462.9 L909.5,576.2 M891.1,459.3 L916.9,573.3 M898.3,455.7 L924.2,570.4 M905.5,452.1 L931.6,567.5 M912.7,448.5 L938.9,564.5 M919.9,444.9 L946.3,561.6 M927.1,441.3 L953.7,558.7 M934.3,437.6 L961.0,555.8 M941.5,434.0 L968.4,552.9 M948.7,430.4 L975.7,550.0 M955.9,426.8 L983.1,547.0 M963.1,423.2 L990.4,544.1 M970.3,419.6 L997.8,541.2 M977.5,416.0 L1005.1,538.3 M984.7,412.4 L1012.5,535.4 M991.9,408.8 L1019.8,532.4 M999.1,405.2 L1027.2,529.5 M1006.3,401.6 L1034.5,526.6 M1013.5,398.0 L1041.9,523.7 M1020.7,394.3 L1049.2,520.8 M1027.9,390.7 L1056.6,517.9 M1035.1,387.1 L1064.0,514.9 M1042.3,383.5 L1071.3,512.0 M1049.5,379.9 L1078.7,509.1 M1056.7,376.3 L1086.0,506.2 M1063.9,372.7 L1093.4,503.3 M1071.1,369.1 L1100.7,500.3 M1078.3,365.5 L1108.1,497.4 M1085.5,361.9 L1115.4,494.5 M1092.7,358.3 L1122.8,491.6 M1099.9,354.6 L1130.1,488.7 M1107.1,351.0 L1137.5,485.8 M1114.3,347.4 L1144.8,482.8 M1121.5,343.8 L1152.2,479.9 M1128.7,340.2 L1159.5,477.0 M1135.9,336.6 L1166.9,474.1 M1143.1,333.0 L1174.3,471.2 M1150.3,329.4 L1181.6,468.3 M1157.5,325.8 L1189.0,465.3 M1164.7,322.2 L1196.3,462.4 M1171.9,318.6 L1203.7,459.5 M1179.1,315.0 L1211.0,456.6 M1186.3,311.3 L1218.4,453.7 M1193.5,307.7 L1225.7,450.7 M1200.7,304.1 L1233.1,447.8 M1207.9,300.5 L1240.4,444.9 M1215.1,296.9 L1247.8,442.0 M1222.3,293.3 L1255.1,439.1 M1229.5,289.7 L1262.5,436.2 M1236.7,286.1 L1269.8,433.2" stroke="#088484" stroke-width="1" fill="none"/>
<clipPath id="ctri"><polygon points="708.0,655.4 789.5,697.5 808.0,613.0"/></clipPath>
<polygon points="708.0,655.4 789.5,697.5 808.0,613.0" fill="#c6f2fc" />
<path clip-path="url(#ctri)" d="M711.0,655.0 l200,-80.0 M717.8,658.5 l200,-81.6 M724.6,661.9 l200,-83.3 M731.5,665.4 l200,-84.9 M738.3,668.8 l200,-86.5 M745.1,672.3 l200,-88.2 M751.9,675.7 l200,-89.8 M758.7,679.2 l200,-91.5 M765.5,682.6 l200,-93.1 M772.4,686.1 l200,-94.7 M779.2,689.5 l200,-96.4 M786.0,693.0 l200,-98.0 M711.0,655.0 L786.0,693.0 M718.0,652.1 L792.5,689.5 M725.0,649.2 L799.0,685.9 M732.0,646.4 L805.4,682.4 M738.9,643.5 L811.9,678.9 M745.9,640.6 L818.4,675.4 M752.9,637.7 L824.9,671.8 M759.9,634.8 L831.4,668.3 M766.9,632.0 L837.8,664.8 M773.9,629.1 L844.3,661.2 M780.8,626.2 L850.8,657.7 M787.8,623.3 L857.3,654.2 M794.8,620.4 L863.8,650.7 M801.8,617.6 L870.2,647.1 M808.8,614.7 L876.7,643.6 M815.8,611.8 L883.2,640.1" stroke="#088484" stroke-width="1" fill="none"/>
<clipPath id="cd0"><polygon points="908.6,446.9 1023.8,502.8 939.0,538.4 926.4,524.8 917.0,480.8"/></clipPath><polygon points="908.6,446.9 1023.8,502.8 939.0,538.4 926.4,524.8 917.0,480.8" fill="#c8ecfc" stroke="#088484" stroke-width="1"/><path clip-path="url(#cd0)" d="M904.7,453.0 l140.0,67.9 M905.8,461.5 l140.0,67.9 M906.9,470.0 l140.0,67.9 M908.0,478.5 l140.0,67.9 M909.1,487.0 l140.0,67.9 M910.2,495.5 l140.0,67.9 M911.3,504.0 l140.0,67.9 M912.4,512.5 l140.0,67.9 M913.5,521.0 l140.0,67.9 M914.6,529.5 l140.0,67.9 M915.8,538.0 l140.0,67.9 M908.6,446.9 l14.0,110.0 M917.4,451.2 l14.3,110.0 M926.2,455.4 l14.6,110.0 M935.0,459.7 l14.9,110.0 M943.8,464.0 l15.2,110.0 M952.6,468.2 l15.5,110.0 M961.4,472.5 l15.8,110.0 M970.2,476.8 l16.1,110.0 M979.0,481.0 l16.4,110.0 M987.8,485.3 l16.7,110.0 M996.6,489.6 l17.0,110.0 M1005.4,493.8 l17.3,110.0 M1014.2,498.1 l17.6,110.0 M1023.0,502.4 l17.9,110.0 M1031.8,506.7 l18.2,110.0 M1040.6,510.9 l18.5,110.0" stroke="#088484" stroke-width="1" fill="none"/><polygon points="954.3,491.8 979.7,502.8 979.7,530.0 954.3,543.0" fill="#98b6d6" stroke="#088484" stroke-width="1.6"/>
<clipPath id="cd245"><polygon points="1154.1,328.9 1286.6,393.2 1189.1,434.1 1174.6,418.5 1163.8,367.9"/></clipPath><polygon points="1154.1,328.9 1286.6,393.2 1189.1,434.1 1174.6,418.5 1163.8,367.9" fill="#c8ecfc" stroke="#088484" stroke-width="1"/><path clip-path="url(#cd245)" d="M1150.4,336.3 l161.0,78.1 M1151.6,346.1 l161.0,78.1 M1152.9,355.8 l161.0,78.1 M1154.2,365.6 l161.0,78.1 M1155.5,375.4 l161.0,78.1 M1156.7,385.1 l161.0,78.1 M1158.0,394.9 l161.0,78.1 M1159.3,404.7 l161.0,78.1 M1160.5,414.5 l161.0,78.1 M1161.8,424.2 l161.0,78.1 M1163.1,434.0 l161.0,78.1 M1154.1,328.9 l16.1,126.5 M1164.2,333.8 l16.4,126.5 M1174.3,338.7 l16.8,126.5 M1184.5,343.6 l17.1,126.5 M1194.6,348.5 l17.5,126.5 M1204.7,353.4 l17.8,126.5 M1214.8,358.3 l18.2,126.5 M1224.9,363.3 l18.5,126.5 M1235.1,368.2 l18.9,126.5 M1245.2,373.1 l19.2,126.5 M1255.3,378.0 l19.5,126.5 M1265.4,382.9 l19.9,126.5 M1275.5,387.8 l20.2,126.5 M1285.7,392.7 l20.6,126.5 M1295.8,397.6 l20.9,126.5 M1305.9,402.5 l21.3,126.5" stroke="#088484" stroke-width="1" fill="none"/><polygon points="1206.7,380.5 1235.9,393.2 1235.9,424.5 1206.7,439.4" fill="#98b6d6" stroke="#088484" stroke-width="1.6"/>
<polygon points="681.0,548.6 688.1,545.0 695.3,541.5 702.4,537.9 709.5,534.3 716.6,530.7 723.8,527.2 730.9,523.6 738.0,520.0 745.1,516.5 752.3,512.9 759.4,509.3 766.5,505.7 773.6,502.2 780.8,498.6 787.9,495.0 795.0,491.5 802.1,487.9 809.3,484.3 816.4,480.7 823.5,477.2 830.6,473.6 837.8,470.0 844.9,466.5 852.0,462.9 859.1,459.3 866.3,455.7 873.4,452.2 880.5,448.6 887.6,445.0 894.8,441.5 901.9,437.9 909.0,434.3 916.1,430.7 923.3,427.2 930.4,423.6 937.5,420.0 944.6,416.5 951.8,412.9 958.9,409.3 966.0,405.7 973.1,402.2 980.3,398.6 987.4,395.0 994.5,391.5 1001.7,387.9 1008.8,384.3 1015.9,380.7 1023.0,377.2 1030.2,373.6 1037.3,370.0 1044.4,366.5 1051.5,362.9 1058.7,359.3 1065.8,355.7 1072.9,352.2 1080.0,348.6 1087.2,345.0 1094.3,341.5 1101.4,337.9 1108.5,334.3 1115.7,330.7 1122.8,327.2 1129.9,323.6 1137.0,320.0 1144.2,316.4 1151.3,312.9 1158.4,309.3 1165.5,305.7 1172.7,302.2 1179.8,298.6 1186.9,295.0 1194.0,291.4 1201.2,287.9 1208.3,284.3 1215.4,280.7 1222.5,277.2 1236.7,286.1 1229.5,289.7 1222.3,293.3 1215.1,296.9 1207.9,300.5 1200.7,304.1 1193.5,307.7 1186.3,311.3 1179.1,315.0 1171.9,318.6 1164.7,322.2 1157.5,325.8 1150.3,329.4 1143.1,333.0 1135.9,336.6 1128.7,340.2 1121.5,343.8 1114.3,347.4 1107.1,351.0 1099.9,354.6 1092.7,358.3 1085.5,361.9 1078.3,365.5 1071.1,369.1 1063.9,372.7 1056.7,376.3 1049.5,379.9 1042.3,383.5 1035.1,387.1 1027.9,390.7 1020.7,394.3 1013.5,398.0 1006.3,401.6 999.1,405.2 991.9,408.8 984.7,412.4 977.5,416.0 970.3,419.6 963.1,423.2 955.9,426.8 948.7,430.4 941.5,434.0 934.3,437.6 927.1,441.3 919.9,444.9 912.7,448.5 905.5,452.1 898.3,455.7 891.1,459.3 883.9,462.9 876.7,466.5 869.5,470.1 862.3,473.7 855.1,477.3 847.9,480.8 840.7,484.2 833.5,487.5 826.3,490.8 819.1,494.1 811.9,497.4 804.7,500.8 797.5,504.1 790.3,507.4 783.1,510.7 775.9,514.0 768.7,517.3 761.5,520.7 754.3,524.0 747.1,527.3 739.9,530.6 732.7,533.9 725.5,537.3 718.3,540.6 711.1,543.9 703.9,547.2 696.7,550.5 689.5,553.8" fill="#c6f2fc" />
<path d="M681.0,548.6 L688.1,545.0 L695.3,541.5 L702.4,537.9 L709.5,534.3 L716.6,530.7 L723.8,527.2 L730.9,523.6 L738.0,520.0 L745.1,516.5 L752.3,512.9 L759.4,509.3 L766.5,505.7 L773.6,502.2 L780.8,498.6 L787.9,495.0 L795.0,491.5 L802.1,487.9 L809.3,484.3 L816.4,480.7 L823.5,477.2 L830.6,473.6 L837.8,470.0 L844.9,466.5 L852.0,462.9 L859.1,459.3 L866.3,455.7 L873.4,452.2 L880.5,448.6 L887.6,445.0 L894.8,441.5 L901.9,437.9 L909.0,434.3 L916.1,430.7 L923.3,427.2 L930.4,423.6 L937.5,420.0 L944.6,416.5 L951.8,412.9 L958.9,409.3 L966.0,405.7 L973.1,402.2 L980.3,398.6 L987.4,395.0 L994.5,391.5 L1001.7,387.9 L1008.8,384.3 L1015.9,380.7 L1023.0,377.2 L1030.2,373.6 L1037.3,370.0 L1044.4,366.5 L1051.5,362.9 L1058.7,359.3 L1065.8,355.7 L1072.9,352.2 L1080.0,348.6 L1087.2,345.0 L1094.3,341.5 L1101.4,337.9 L1108.5,334.3 L1115.7,330.7 L1122.8,327.2 L1129.9,323.6 L1137.0,320.0 L1144.2,316.4 L1151.3,312.9 L1158.4,309.3 L1165.5,305.7 L1172.7,302.2 L1179.8,298.6 L1186.9,295.0 L1194.0,291.4 L1201.2,287.9 L1208.3,284.3 L1215.4,280.7 L1222.5,277.2 M685.2,551.2 L692.4,547.8 L699.6,544.3 L706.7,540.9 L713.9,537.4 L721.1,534.0 L728.2,530.6 L735.4,527.1 L742.6,523.7 L749.7,520.2 L756.9,516.8 L764.0,513.3 L771.2,509.9 L778.4,506.4 L785.5,503.0 L792.7,499.5 L799.9,496.1 L807.0,492.7 L814.2,489.2 L821.3,485.8 L828.5,482.3 L835.7,478.9 L842.8,475.4 L850.0,471.9 L857.2,468.3 L864.3,464.7 L871.5,461.1 L878.6,457.5 L885.8,453.9 L893.0,450.4 L900.1,446.8 L907.3,443.2 L914.5,439.6 L921.6,436.0 L928.8,432.4 L935.9,428.8 L943.1,425.2 L950.3,421.6 L957.4,418.0 L964.6,414.5 L971.8,410.9 L978.9,407.3 L986.1,403.7 L993.3,400.1 L1000.4,396.5 L1007.6,392.9 L1014.7,389.3 L1021.9,385.7 L1029.1,382.1 L1036.2,378.6 L1043.4,375.0 L1050.6,371.4 L1057.7,367.8 L1064.9,364.2 L1072.0,360.6 L1079.2,357.0 L1086.4,353.4 L1093.5,349.8 L1100.7,346.2 L1107.9,342.7 L1115.0,339.1 L1122.2,335.5 L1129.3,331.9 L1136.5,328.3 L1143.7,324.7 L1150.8,321.1 L1158.0,317.5 L1165.2,313.9 L1172.3,310.3 L1179.5,306.8 L1186.6,303.2 L1193.8,299.6 L1201.0,296.0 L1208.1,292.4 L1215.3,288.8 L1222.5,285.2 L1229.6,281.6 M689.5,553.8 L696.7,550.5 L703.9,547.2 L711.1,543.9 L718.3,540.6 L725.5,537.3 L732.7,533.9 L739.9,530.6 L747.1,527.3 L754.3,524.0 L761.5,520.7 L768.7,517.3 L775.9,514.0 L783.1,510.7 L790.3,507.4 L797.5,504.1 L804.7,500.8 L811.9,497.4 L819.1,494.1 L826.3,490.8 L833.5,487.5 L840.7,484.2 L847.9,480.8 L855.1,477.3 L862.3,473.7 L869.5,470.1 L876.7,466.5 L883.9,462.9 L891.1,459.3 L898.3,455.7 L905.5,452.1 L912.7,448.5 L919.9,444.9 L927.1,441.3 L934.3,437.6 L941.5,434.0 L948.7,430.4 L955.9,426.8 L963.1,423.2 L970.3,419.6 L977.5,416.0 L984.7,412.4 L991.9,408.8 L999.1,405.2 L1006.3,401.6 L1013.5,398.0 L1020.7,394.3 L1027.9,390.7 L1035.1,387.1 L1042.3,383.5 L1049.5,379.9 L1056.7,376.3 L1063.9,372.7 L1071.1,369.1 L1078.3,365.5 L1085.5,361.9 L1092.7,358.3 L1099.9,354.6 L1107.1,351.0 L1114.3,347.4 L1121.5,343.8 L1128.7,340.2 L1135.9,336.6 L1143.1,333.0 L1150.3,329.4 L1157.5,325.8 L1164.7,322.2 L1171.9,318.6 L1179.1,315.0 L1186.3,311.3 L1193.5,307.7 L1200.7,304.1 L1207.9,300.5 L1215.1,296.9 L1222.3,293.3 L1229.5,289.7 L1236.7,286.1 M681.0,548.6 L689.5,553.8 M688.1,545.0 L696.7,550.5 M695.3,541.5 L703.9,547.2 M702.4,537.9 L711.1,543.9 M709.5,534.3 L718.3,540.6 M716.6,530.7 L725.5,537.3 M723.8,527.2 L732.7,533.9 M730.9,523.6 L739.9,530.6 M738.0,520.0 L747.1,527.3 M745.1,516.5 L754.3,524.0 M752.3,512.9 L761.5,520.7 M759.4,509.3 L768.7,517.3 M766.5,505.7 L775.9,514.0 M773.6,502.2 L783.1,510.7 M780.8,498.6 L790.3,507.4 M787.9,495.0 L797.5,504.1 M795.0,491.5 L804.7,500.8 M802.1,487.9 L811.9,497.4 M809.3,484.3 L819.1,494.1 M816.4,480.7 L826.3,490.8 M823.5,477.2 L833.5,487.5 M830.6,473.6 L840.7,484.2 M837.8,470.0 L847.9,480.8 M844.9,466.5 L855.1,477.3 M852.0,462.9 L862.3,473.7 M859.1,459.3 L869.5,470.1 M866.3,455.7 L876.7,466.5 M873.4,452.2 L883.9,462.9 M880.5,448.6 L891.1,459.3 M887.6,445.0 L898.3,455.7 M894.8,441.5 L905.5,452.1 M901.9,437.9 L912.7,448.5 M909.0,434.3 L919.9,444.9 M916.1,430.7 L927.1,441.3 M923.3,427.2 L934.3,437.6 M930.4,423.6 L941.5,434.0 M937.5,420.0 L948.7,430.4 M944.6,416.5 L955.9,426.8 M951.8,412.9 L963.1,423.2 M958.9,409.3 L970.3,419.6 M966.0,405.7 L977.5,416.0 M973.1,402.2 L984.7,412.4 M980.3,398.6 L991.9,408.8 M987.4,395.0 L999.1,405.2 M994.5,391.5 L1006.3,401.6 M1001.7,387.9 L1013.5,398.0 M1008.8,384.3 L1020.7,394.3 M1015.9,380.7 L1027.9,390.7 M1023.0,377.2 L1035.1,387.1 M1030.2,373.6 L1042.3,383.5 M1037.3,370.0 L1049.5,379.9 M1044.4,366.5 L1056.7,376.3 M1051.5,362.9 L1063.9,372.7 M1058.7,359.3 L1071.1,369.1 M1065.8,355.7 L1078.3,365.5 M1072.9,352.2 L1085.5,361.9 M1080.0,348.6 L1092.7,358.3 M1087.2,345.0 L1099.9,354.6 M1094.3,341.5 L1107.1,351.0 M1101.4,337.9 L1114.3,347.4 M1108.5,334.3 L1121.5,343.8 M1115.7,330.7 L1128.7,340.2 M1122.8,327.2 L1135.9,336.6 M1129.9,323.6 L1143.1,333.0 M1137.0,320.0 L1150.3,329.4 M1144.2,316.4 L1157.5,325.8 M1151.3,312.9 L1164.7,322.2 M1158.4,309.3 L1171.9,318.6 M1165.5,305.7 L1179.1,315.0 M1172.7,302.2 L1186.3,311.3 M1179.8,298.6 L1193.5,307.7 M1186.9,295.0 L1200.7,304.1 M1194.0,291.4 L1207.9,300.5 M1201.2,287.9 L1215.1,296.9 M1208.3,284.3 L1222.3,293.3 M1215.4,280.7 L1229.5,289.7 M1222.5,277.2 L1236.7,286.1" stroke="#088484" stroke-width="1" fill="none"/>
<polygon points="810.6,613.0 817.1,609.9 823.6,606.8 830.1,603.7 836.6,600.7 843.1,597.6 849.6,594.5 856.1,591.4 862.7,588.3 869.2,585.2 875.7,582.2 882.2,579.1 888.7,576.0 895.2,572.9 901.7,569.8 908.2,566.7 914.7,563.7 921.2,560.6 927.7,557.5 934.2,554.4 940.7,551.3 947.2,548.2 953.8,545.2 960.3,542.1 966.8,539.0 973.3,535.9 979.8,532.8 986.3,529.7 992.8,526.6 999.3,523.6 1005.8,520.5 1012.3,517.4 1018.8,514.3 1025.3,511.2 1031.8,508.1 1038.3,505.1 1044.9,502.0 1051.4,498.9 1057.9,495.8 1064.4,492.7 1070.9,489.6 1077.4,486.6 1083.9,483.5 1090.4,480.4 1096.9,477.3 1103.4,474.2 1109.9,471.1 1116.4,468.1 1122.9,465.0 1129.4,461.9 1135.9,458.8 1142.5,455.7 1149.0,452.6 1155.5,449.5 1162.0,446.5 1168.5,443.4 1175.0,440.3 1181.5,437.2 1188.0,434.1 1194.5,431.0 1201.0,428.0 1207.5,424.9 1214.0,421.8 1220.5,418.7 1227.0,415.6 1233.6,412.5 1240.1,409.5 1246.6,406.4 1253.1,403.3 1259.6,400.2 1266.1,397.1 1272.6,394.0 1279.1,391.0 1285.6,387.9 1292.1,384.8 1298.6,381.7 1305.1,378.6 1281.3,448.5 1274.8,451.7 1268.3,454.9 1261.8,458.1 1255.3,461.3 1248.7,464.6 1242.2,467.8 1235.7,471.0 1229.2,474.2 1222.7,477.4 1216.2,480.6 1209.6,483.8 1203.1,487.0 1196.6,490.3 1190.1,493.5 1183.6,496.7 1177.0,499.9 1170.5,503.1 1164.0,506.3 1157.5,509.5 1151.0,512.8 1144.5,516.0 1137.9,519.2 1131.4,522.4 1124.9,525.6 1118.4,528.8 1111.9,532.0 1105.4,535.2 1098.8,538.5 1092.3,541.7 1085.8,544.9 1079.3,548.1 1072.8,551.3 1066.3,554.5 1059.7,557.7 1053.2,561.0 1046.7,564.2 1040.2,567.4 1033.7,570.6 1027.1,573.8 1020.6,577.0 1014.1,580.2 1007.6,583.4 1001.1,586.7 994.6,589.9 988.0,593.1 981.5,596.3 975.0,599.5 968.5,602.7 962.0,605.9 955.5,609.2 948.9,612.4 942.4,615.6 935.9,618.8 929.4,622.0 922.9,625.2 916.3,628.4 909.8,631.6 903.3,634.9 896.8,638.1 890.3,641.3 883.8,644.5 877.2,647.7 870.7,650.9 864.2,654.1 857.7,657.4 851.2,660.6 844.7,663.8 838.1,667.0 831.6,670.2 825.1,673.4 818.6,676.6 812.1,679.8 805.6,683.1 799.0,686.3 792.5,689.5 786.0,692.7" fill="#6a7e97" />
<path d="M810.6,613.0 L1305.1,378.6 M808.6,619.6 L1303.1,384.4 M806.5,626.3 L1301.2,390.3 M804.5,632.9 L1299.2,396.1 M802.4,639.6 L1297.2,401.9 M800.4,646.2 L1295.2,407.7 M798.3,652.9 L1293.2,413.6 M796.2,659.5 L1291.2,419.4 M794.2,666.1 L1289.3,425.2 M792.1,672.8 L1287.3,431.0 M790.1,679.4 L1285.3,436.8 M788.0,686.1 L1283.3,442.7 M786.0,692.7 L1281.3,448.5 M810.6,613.0 L786.0,692.7 M817.1,609.9 L792.5,689.5 M823.6,606.8 L799.0,686.3 M830.1,603.7 L805.6,683.1 M836.6,600.7 L812.1,679.8 M843.1,597.6 L818.6,676.6 M849.6,594.5 L825.1,673.4 M856.1,591.4 L831.6,670.2 M862.7,588.3 L838.1,667.0 M869.2,585.2 L844.7,663.8 M875.7,582.2 L851.2,660.6 M882.2,579.1 L857.7,657.4 M888.7,576.0 L864.2,654.1 M895.2,572.9 L870.7,650.9 M901.7,569.8 L877.2,647.7 M908.2,566.7 L883.8,644.5 M914.7,563.7 L890.3,641.3 M921.2,560.6 L896.8,638.1 M927.7,557.5 L903.3,634.9 M934.2,554.4 L909.8,631.6 M940.7,551.3 L916.3,628.4 M947.2,548.2 L922.9,625.2 M953.8,545.2 L929.4,622.0 M960.3,542.1 L935.9,618.8 M966.8,539.0 L942.4,615.6 M973.3,535.9 L948.9,612.4 M979.8,532.8 L955.5,609.2 M986.3,529.7 L962.0,605.9 M992.8,526.6 L968.5,602.7 M999.3,523.6 L975.0,599.5 M1005.8,520.5 L981.5,596.3 M1012.3,517.4 L988.0,593.1 M1018.8,514.3 L994.6,589.9 M1025.3,511.2 L1001.1,586.7 M1031.8,508.1 L1007.6,583.4 M1038.3,505.1 L1014.1,580.2 M1044.9,502.0 L1020.6,577.0 M1051.4,498.9 L1027.1,573.8 M1057.9,495.8 L1033.7,570.6 M1064.4,492.7 L1040.2,567.4 M1070.9,489.6 L1046.7,564.2 M1077.4,486.6 L1053.2,561.0 M1083.9,483.5 L1059.7,557.7 M1090.4,480.4 L1066.3,554.5 M1096.9,477.3 L1072.8,551.3 M1103.4,474.2 L1079.3,548.1 M1109.9,471.1 L1085.8,544.9 M1116.4,468.1 L1092.3,541.7 M1122.9,465.0 L1098.8,538.5 M1129.4,461.9 L1105.4,535.2 M1135.9,458.8 L1111.9,532.0 M1142.5,455.7 L1118.4,528.8 M1149.0,452.6 L1124.9,525.6 M1155.5,449.5 L1131.4,522.4 M1162.0,446.5 L1137.9,519.2 M1168.5,443.4 L1144.5,516.0 M1175.0,440.3 L1151.0,512.8 M1181.5,437.2 L1157.5,509.5 M1188.0,434.1 L1164.0,506.3 M1194.5,431.0 L1170.5,503.1 M1201.0,428.0 L1177.0,499.9 M1207.5,424.9 L1183.6,496.7 M1214.0,421.8 L1190.1,493.5 M1220.5,418.7 L1196.6,490.3 M1227.0,415.6 L1203.1,487.0 M1233.6,412.5 L1209.6,483.8 M1240.1,409.5 L1216.2,480.6 M1246.6,406.4 L1222.7,477.4 M1253.1,403.3 L1229.2,474.2 M1259.6,400.2 L1235.7,471.0 M1266.1,397.1 L1242.2,467.8 M1272.6,394.0 L1248.7,464.6 M1279.1,391.0 L1255.3,461.3 M1285.6,387.9 L1261.8,458.1 M1292.1,384.8 L1268.3,454.9 M1298.6,381.7 L1274.8,451.7 M1305.1,378.6 L1281.3,448.5" stroke="#088484" stroke-width="1" fill="none"/>
<polygon points="786.0,692.7 792.5,689.5 799.0,686.3 805.6,683.1 812.1,679.8 818.6,676.6 825.1,673.4 831.6,670.2 838.1,667.0 844.7,663.8 851.2,660.6 857.7,657.4 864.2,654.1 870.7,650.9 877.2,647.7 883.8,644.5 890.3,641.3 896.8,638.1 903.3,634.9 909.8,631.6 916.3,628.4 922.9,625.2 929.4,622.0 935.9,618.8 942.4,615.6 948.9,612.4 955.5,609.2 962.0,605.9 968.5,602.7 975.0,599.5 981.5,596.3 988.0,593.1 994.6,589.9 1001.1,586.7 1007.6,583.4 1014.1,580.2 1020.6,577.0 1027.1,573.8 1033.7,570.6 1040.2,567.4 1046.7,564.2 1053.2,561.0 1059.7,557.7 1066.3,554.5 1072.8,551.3 1079.3,548.1 1085.8,544.9 1092.3,541.7 1098.8,538.5 1105.4,535.2 1111.9,532.0 1118.4,528.8 1124.9,525.6 1131.4,522.4 1137.9,519.2 1144.5,516.0 1151.0,512.8 1157.5,509.5 1164.0,506.3 1170.5,503.1 1177.0,499.9 1183.6,496.7 1190.1,493.5 1196.6,490.3 1203.1,487.0 1209.6,483.8 1216.2,480.6 1222.7,477.4 1229.2,474.2 1235.7,471.0 1242.2,467.8 1248.7,464.6 1255.3,461.3 1261.8,458.1 1268.3,454.9 1274.8,451.7 1281.3,448.5 1285.5,456.5 1279.0,459.6 1272.4,462.8 1265.9,466.0 1259.4,469.2 1252.9,472.3 1246.3,475.5 1239.8,478.7 1233.3,481.8 1226.8,485.0 1220.2,488.2 1213.7,491.4 1207.2,494.5 1200.7,497.7 1194.1,500.9 1187.6,504.0 1181.1,507.2 1174.5,510.4 1168.0,513.6 1161.5,516.7 1155.0,519.9 1148.4,523.1 1141.9,526.2 1135.4,529.4 1128.9,532.6 1122.3,535.8 1115.8,538.9 1109.3,542.1 1102.8,545.3 1096.2,548.4 1089.7,551.6 1083.2,554.8 1076.7,558.0 1070.1,561.1 1063.6,564.3 1057.1,567.5 1050.5,570.6 1044.0,573.8 1037.5,577.0 1031.0,580.2 1024.4,583.3 1017.9,586.5 1011.4,589.7 1004.9,592.8 998.3,596.0 991.8,599.2 985.3,602.4 978.8,605.5 972.2,608.7 965.7,611.9 959.2,615.0 952.7,618.2 946.1,621.4 939.6,624.6 933.1,627.7 926.6,630.9 920.0,634.1 913.5,637.2 907.0,640.4 900.4,643.6 893.9,646.8 887.4,649.9 880.9,653.1 874.3,656.3 867.8,659.4 861.3,662.6 854.8,665.8 848.2,669.0 841.7,672.1 835.2,675.3 828.7,678.5 822.1,681.6 815.6,684.8 809.1,688.0 802.6,691.2 796.0,694.3 789.5,697.5" fill="#c6f2fc" />
<path d="M786.0,692.7 L1281.3,448.5 M789.5,697.5 L1285.5,456.5 M786.0,692.7 L789.5,697.5 M792.5,689.5 L796.0,694.3 M799.0,686.3 L802.6,691.2 M805.6,683.1 L809.1,688.0 M812.1,679.8 L815.6,684.8 M818.6,676.6 L822.1,681.6 M825.1,673.4 L828.7,678.5 M831.6,670.2 L835.2,675.3 M838.1,667.0 L841.7,672.1 M844.7,663.8 L848.2,669.0 M851.2,660.6 L854.8,665.8 M857.7,657.4 L861.3,662.6 M864.2,654.1 L867.8,659.4 M870.7,650.9 L874.3,656.3 M877.2,647.7 L880.9,653.1 M883.8,644.5 L887.4,649.9 M890.3,641.3 L893.9,646.8 M896.8,638.1 L900.4,643.6 M903.3,634.9 L907.0,640.4 M909.8,631.6 L913.5,637.2 M916.3,628.4 L920.0,634.1 M922.9,625.2 L926.6,630.9 M929.4,622.0 L933.1,627.7 M935.9,618.8 L939.6,624.6 M942.4,615.6 L946.1,621.4 M948.9,612.4 L952.7,618.2 M955.5,609.2 L959.2,615.0 M962.0,605.9 L965.7,611.9 M968.5,602.7 L972.2,608.7 M975.0,599.5 L978.8,605.5 M981.5,596.3 L985.3,602.4 M988.0,593.1 L991.8,599.2 M994.6,589.9 L998.3,596.0 M1001.1,586.7 L1004.9,592.8 M1007.6,583.4 L1011.4,589.7 M1014.1,580.2 L1017.9,586.5 M1020.6,577.0 L1024.4,583.3 M1027.1,573.8 L1031.0,580.2 M1033.7,570.6 L1037.5,577.0 M1040.2,567.4 L1044.0,573.8 M1046.7,564.2 L1050.5,570.6 M1053.2,561.0 L1057.1,567.5 M1059.7,557.7 L1063.6,564.3 M1066.3,554.5 L1070.1,561.1 M1072.8,551.3 L1076.7,558.0 M1079.3,548.1 L1083.2,554.8 M1085.8,544.9 L1089.7,551.6 M1092.3,541.7 L1096.2,548.4 M1098.8,538.5 L1102.8,545.3 M1105.4,535.2 L1109.3,542.1 M1111.9,532.0 L1115.8,538.9 M1118.4,528.8 L1122.3,535.8 M1124.9,525.6 L1128.9,532.6 M1131.4,522.4 L1135.4,529.4 M1137.9,519.2 L1141.9,526.2 M1144.5,516.0 L1148.4,523.1 M1151.0,512.8 L1155.0,519.9 M1157.5,509.5 L1161.5,516.7 M1164.0,506.3 L1168.0,513.6 M1170.5,503.1 L1174.5,510.4 M1177.0,499.9 L1181.1,507.2 M1183.6,496.7 L1187.6,504.0 M1190.1,493.5 L1194.1,500.9 M1196.6,490.3 L1200.7,497.7 M1203.1,487.0 L1207.2,494.5 M1209.6,483.8 L1213.7,491.4 M1216.2,480.6 L1220.2,488.2 M1222.7,477.4 L1226.8,485.0 M1229.2,474.2 L1233.3,481.8 M1235.7,471.0 L1239.8,478.7 M1242.2,467.8 L1246.3,475.5 M1248.7,464.6 L1252.9,472.3 M1255.3,461.3 L1259.4,469.2 M1261.8,458.1 L1265.9,466.0 M1268.3,454.9 L1272.4,462.8 M1274.8,451.7 L1279.0,459.6 M1281.3,448.5 L1285.5,456.5" stroke="#088484" stroke-width="1" fill="none"/>
<polygon points="803.0,607.0 809.4,603.9 815.8,600.8 822.2,597.7 828.6,594.6 835.0,591.6 841.4,588.5 847.8,585.4 854.2,582.3 860.6,579.2 867.0,576.1 873.3,573.0 879.7,570.0 886.1,566.9 892.5,563.8 898.9,560.7 905.3,557.6 911.7,554.5 918.1,551.4 924.5,548.3 930.9,545.2 937.3,542.2 943.7,539.1 950.1,536.0 956.5,532.9 962.9,529.8 969.3,526.7 975.7,523.6 982.1,520.5 988.5,517.5 994.9,514.4 1001.2,511.3 1007.6,508.2 1014.0,505.1 1020.4,502.0 1026.8,498.9 1033.2,495.9 1039.6,492.8 1046.0,489.7 1052.4,486.6 1058.8,483.5 1065.2,480.4 1071.6,477.3 1078.0,474.2 1084.4,471.1 1090.8,468.1 1097.2,465.0 1103.6,461.9 1110.0,458.8 1116.4,455.7 1122.8,452.6 1129.2,449.5 1135.5,446.5 1141.9,443.4 1148.3,440.3 1154.7,437.2 1161.1,434.1 1167.5,431.0 1173.9,427.9 1180.3,424.8 1186.7,421.8 1193.1,418.7 1199.5,415.6 1205.9,412.5 1212.3,409.4 1218.7,406.3 1225.1,403.2 1231.5,400.1 1237.9,397.1 1244.3,394.0 1250.7,390.9 1257.1,387.8 1263.5,384.7 1269.8,381.6 1276.2,378.5 1282.6,375.4 1289.0,372.4 1303.0,377.6 1296.6,380.8 1290.2,383.9 1283.8,387.0 1277.5,390.2 1271.1,393.3 1264.7,396.5 1258.3,399.6 1251.9,402.7 1245.5,405.9 1239.1,409.0 1232.7,412.1 1226.3,415.3 1219.9,418.4 1213.5,421.5 1207.1,424.7 1200.7,427.8 1194.3,431.0 1187.9,434.1 1181.5,437.2 1175.1,440.4 1168.7,443.5 1162.3,446.6 1155.9,449.8 1149.5,452.9 1143.2,456.0 1136.8,459.2 1130.4,462.3 1124.0,465.5 1117.6,468.6 1111.2,471.7 1104.8,474.9 1098.4,478.0 1092.0,481.1 1085.6,484.3 1079.2,487.4 1072.8,490.5 1066.4,493.7 1060.0,496.8 1053.6,500.0 1047.2,503.1 1040.8,506.2 1034.4,509.4 1028.0,512.5 1021.6,515.6 1015.2,518.8 1008.9,521.9 1002.5,525.0 996.1,528.2 989.7,531.3 983.3,534.5 976.9,537.6 970.5,540.7 964.1,543.9 957.7,547.0 951.3,550.1 944.9,553.3 938.5,556.4 932.1,559.5 925.7,562.7 919.3,565.8 912.9,569.0 906.5,572.1 900.1,575.2 893.7,578.4 887.3,581.5 881.0,584.6 874.6,587.8 868.2,590.9 861.8,594.0 855.4,597.2 849.0,600.3 842.6,603.5 836.2,606.6 829.8,609.7 823.4,612.9 817.0,616.0" fill="#c6f2fc" />
<path d="M803.0,607.0 L1289.0,372.4 M810.0,611.5 L1296.0,375.0 M817.0,616.0 L1303.0,377.6 M803.0,607.0 L817.0,616.0 M809.4,603.9 L823.4,612.9 M815.8,600.8 L829.8,609.7 M822.2,597.7 L836.2,606.6 M828.6,594.6 L842.6,603.5 M835.0,591.6 L849.0,600.3 M841.4,588.5 L855.4,597.2 M847.8,585.4 L861.8,594.0 M854.2,582.3 L868.2,590.9 M860.6,579.2 L874.6,587.8 M867.0,576.1 L881.0,584.6 M873.3,573.0 L887.3,581.5 M879.7,570.0 L893.7,578.4 M886.1,566.9 L900.1,575.2 M892.5,563.8 L906.5,572.1 M898.9,560.7 L912.9,569.0 M905.3,557.6 L919.3,565.8 M911.7,554.5 L925.7,562.7 M918.1,551.4 L932.1,559.5 M924.5,548.3 L938.5,556.4 M930.9,545.2 L944.9,553.3 M937.3,542.2 L951.3,550.1 M943.7,539.1 L957.7,547.0 M950.1,536.0 L964.1,543.9 M956.5,532.9 L970.5,540.7 M962.9,529.8 L976.9,537.6 M969.3,526.7 L983.3,534.5 M975.7,523.6 L989.7,531.3 M982.1,520.5 L996.1,528.2 M988.5,517.5 L1002.5,525.0 M994.9,514.4 L1008.9,521.9 M1001.2,511.3 L1015.2,518.8 M1007.6,508.2 L1021.6,515.6 M1014.0,505.1 L1028.0,512.5 M1020.4,502.0 L1034.4,509.4 M1026.8,498.9 L1040.8,506.2 M1033.2,495.9 L1047.2,503.1 M1039.6,492.8 L1053.6,500.0 M1046.0,489.7 L1060.0,496.8 M1052.4,486.6 L1066.4,493.7 M1058.8,483.5 L1072.8,490.5 M1065.2,480.4 L1079.2,487.4 M1071.6,477.3 L1085.6,484.3 M1078.0,474.2 L1092.0,481.1 M1084.4,471.1 L1098.4,478.0 M1090.8,468.1 L1104.8,474.9 M1097.2,465.0 L1111.2,471.7 M1103.6,461.9 L1117.6,468.6 M1110.0,458.8 L1124.0,465.5 M1116.4,455.7 L1130.4,462.3 M1122.8,452.6 L1136.8,459.2 M1129.2,449.5 L1143.2,456.0 M1135.5,446.5 L1149.5,452.9 M1141.9,443.4 L1155.9,449.8 M1148.3,440.3 L1162.3,446.6 M1154.7,437.2 L1168.7,443.5 M1161.1,434.1 L1175.1,440.4 M1167.5,431.0 L1181.5,437.2 M1173.9,427.9 L1187.9,434.1 M1180.3,424.8 L1194.3,431.0 M1186.7,421.8 L1200.7,427.8 M1193.1,418.7 L1207.1,424.7 M1199.5,415.6 L1213.5,421.5 M1205.9,412.5 L1219.9,418.4 M1212.3,409.4 L1226.3,415.3 M1218.7,406.3 L1232.7,412.1 M1225.1,403.2 L1239.1,409.0 M1231.5,400.1 L1245.5,405.9 M1237.9,397.1 L1251.9,402.7 M1244.3,394.0 L1258.3,399.6 M1250.7,390.9 L1264.7,396.5 M1257.1,387.8 L1271.1,393.3 M1263.5,384.7 L1277.5,390.2 M1269.8,381.6 L1283.8,387.0 M1276.2,378.5 L1290.2,383.9 M1282.6,375.4 L1296.6,380.8 M1289.0,372.4 L1303.0,377.6" stroke="#088484" stroke-width="1" fill="none"/>
<path d="M691.0,553.5 L810.5,611.5 M823.0,483.3 L943.7,543.7 M968.7,420.0 L1083.0,475.5 M1096.0,348.8 L1213.0,409.0 M810.5,611.5 L823.0,483.3 M823.0,483.3 L1083.0,475.5 M1083.0,475.5 L1096.0,348.8 M1096.0,348.8 L1343.0,345.0" stroke="#088484" stroke-width="3" fill="none" shape-rendering="auto"/>
<path d="M691.0,553.5 L810.5,611.5 M823.0,483.3 L943.7,543.7 M968.7,420.0 L1083.0,475.5 M1096.0,348.8 L1213.0,409.0 M810.5,611.5 L823.0,483.3 M823.0,483.3 L1083.0,475.5 M1083.0,475.5 L1096.0,348.8 M1096.0,348.8 L1343.0,345.0" stroke="#d4f8fc" stroke-width="1" stroke-dasharray="2.200,1" fill="none" shape-rendering="auto"/>
<path d="M689,554.5 L711,655 M708,655.4 L789.5,697.5 M786,692.7 L810.6,613" stroke="#088484" stroke-width="2" fill="none" shape-rendering="auto"/>
</g>
<g shape-rendering="crispEdges" fill="none" stroke="#f21cf2" stroke-width="1"><path d="M1029.5,533.7 L1070.1,514.2 M1036.7,537.9 L1077.3,518.4 M1043.9,542.1 L1084.5,522.6 M1029.5,533.7 L1043.9,542.1 M1036.3,530.5 L1050.7,538.9 M1043.0,527.2 L1057.4,535.6 M1049.8,524.0 L1064.2,532.4 M1056.6,520.7 L1071.0,529.1 M1063.3,517.5 L1077.7,525.9 M1070.1,514.2 L1084.5,522.6 M1029.5,533.7 v-34.0 M1036.7,537.9 v-34.0 M1043.9,542.1 v-34.0 M1036.3,530.5 v-34.0 M1043.5,534.7 v-34.0 M1050.7,538.9 v-34.0 M1043.0,527.2 v-34.0 M1050.2,531.4 v-34.0 M1057.4,535.6 v-34.0 M1049.8,524.0 v-34.0 M1057.0,528.2 v-34.0 M1064.2,532.4 v-34.0 M1056.6,520.7 v-34.0 M1063.8,524.9 v-34.0 M1071.0,529.1 v-34.0 M1063.3,517.5 v-34.0 M1070.5,521.7 v-34.0 M1077.7,525.9 v-34.0 M1070.1,514.2 v-34.0 M1077.3,518.4 v-34.0 M1084.5,522.6 v-34.0"/><path d="M1070.1,473.7 l-3.3,9.5 h2.4 v3 h1.8 v-3 h2.4 z" fill="#10dc10" stroke="#f21cf2" shape-rendering="auto" stroke-width="0.9"/><path d="M1063.3,477.0 l-3.3,9.5 h2.4 v3 h1.8 v-3 h2.4 z" fill="#10dc10" stroke="#f21cf2" shape-rendering="auto" stroke-width="0.9"/><path d="M1056.6,480.2 l-3.3,9.5 h2.4 v3 h1.8 v-3 h2.4 z" fill="#10dc10" stroke="#f21cf2" shape-rendering="auto" stroke-width="0.9"/><path d="M1049.8,483.5 l-3.3,9.5 h2.4 v3 h1.8 v-3 h2.4 z" fill="#10dc10" stroke="#f21cf2" shape-rendering="auto" stroke-width="0.9"/><path d="M1043.0,486.7 l-3.3,9.5 h2.4 v3 h1.8 v-3 h2.4 z" fill="#10dc10" stroke="#f21cf2" shape-rendering="auto" stroke-width="0.9"/><path d="M1036.3,490.0 l-3.3,9.5 h2.4 v3 h1.8 v-3 h2.4 z" fill="#10dc10" stroke="#f21cf2" shape-rendering="auto" stroke-width="0.9"/><path d="M1029.5,493.2 l-3.3,9.5 h2.4 v3 h1.8 v-3 h2.4 z" fill="#10dc10" stroke="#f21cf2" shape-rendering="auto" stroke-width="0.9"/><path d="M1077.3,477.9 l-3.3,9.5 h2.4 v3 h1.8 v-3 h2.4 z" fill="#10dc10" stroke="#f21cf2" shape-rendering="auto" stroke-width="0.9"/><path d="M1070.5,481.2 l-3.3,9.5 h2.4 v3 h1.8 v-3 h2.4 z" fill="#10dc10" stroke="#f21cf2" shape-rendering="auto" stroke-width="0.9"/><path d="M1063.8,484.4 l-3.3,9.5 h2.4 v3 h1.8 v-3 h2.4 z" fill="#10dc10" stroke="#f21cf2" shape-rendering="auto" stroke-width="0.9"/><path d="M1057.0,487.7 l-3.3,9.5 h2.4 v3 h1.8 v-3 h2.4 z" fill="#10dc10" stroke="#f21cf2" shape-rendering="auto" stroke-width="0.9"/><path d="M1050.2,490.9 l-3.3,9.5 h2.4 v3 h1.8 v-3 h2.4 z" fill="#10dc10" stroke="#f21cf2" shape-rendering="auto" stroke-width="0.9"/><path d="M1043.5,494.2 l-3.3,9.5 h2.4 v3 h1.8 v-3 h2.4 z" fill="#10dc10" stroke="#f21cf2" shape-rendering="auto" stroke-width="0.9"/><path d="M1036.7,497.4 l-3.3,9.5 h2.4 v3 h1.8 v-3 h2.4 z" fill="#10dc10" stroke="#f21cf2" shape-rendering="auto" stroke-width="0.9"/><path d="M1084.5,482.1 l-3.3,9.5 h2.4 v3 h1.8 v-3 h2.4 z" fill="#10dc10" stroke="#f21cf2" shape-rendering="auto" stroke-width="0.9"/><path d="M1077.7,485.4 l-3.3,9.5 h2.4 v3 h1.8 v-3 h2.4 z" fill="#10dc10" stroke="#f21cf2" shape-rendering="auto" stroke-width="0.9"/><path d="M1071.0,488.6 l-3.3,9.5 h2.4 v3 h1.8 v-3 h2.4 z" fill="#10dc10" stroke="#f21cf2" shape-rendering="auto" stroke-width="0.9"/><path d="M1064.2,491.9 l-3.3,9.5 h2.4 v3 h1.8 v-3 h2.4 z" fill="#10dc10" stroke="#f21cf2" shape-rendering="auto" stroke-width="0.9"/><path d="M1057.4,495.1 l-3.3,9.5 h2.4 v3 h1.8 v-3 h2.4 z" fill="#10dc10" stroke="#f21cf2" shape-rendering="auto" stroke-width="0.9"/><path d="M1050.7,498.4 l-3.3,9.5 h2.4 v3 h1.8 v-3 h2.4 z" fill="#10dc10" stroke="#f21cf2" shape-rendering="auto" stroke-width="0.9"/><path d="M1043.9,501.6 l-3.3,9.5 h2.4 v3 h1.8 v-3 h2.4 z" fill="#10dc10" stroke="#f21cf2" shape-rendering="auto" stroke-width="0.9"/></g>
<g shape-rendering="crispEdges" fill="none" stroke="#f21cf2" stroke-width="1"><path d="M1097.2,568.4 L1138.7,548.9 M1104.4,572.6 L1145.9,553.1 M1111.6,576.8 L1153.1,557.3 M1097.2,568.4 L1111.6,576.8 M1104.1,565.1 L1118.5,573.5 M1111.0,561.9 L1125.4,570.3 M1118.0,558.6 L1132.3,567.0 M1124.9,555.4 L1139.3,563.8 M1131.8,552.1 L1146.2,560.5 M1138.7,548.9 L1153.1,557.3 M1097.2,568.4 v-34.0 M1104.4,572.6 v-34.0 M1111.6,576.8 v-34.0 M1104.1,565.1 v-34.0 M1111.3,569.3 v-34.0 M1118.5,573.5 v-34.0 M1111.0,561.9 v-34.0 M1118.2,566.1 v-34.0 M1125.4,570.3 v-34.0 M1118.0,558.6 v-34.0 M1125.2,562.8 v-34.0 M1132.3,567.0 v-34.0 M1124.9,555.4 v-34.0 M1132.1,559.6 v-34.0 M1139.3,563.8 v-34.0 M1131.8,552.1 v-34.0 M1139.0,556.3 v-34.0 M1146.2,560.5 v-34.0 M1138.7,548.9 v-34.0 M1145.9,553.1 v-34.0 M1153.1,557.3 v-34.0"/><path d="M1138.7,508.4 l-3.3,9.5 h2.4 v3 h1.8 v-3 h2.4 z" fill="#10dc10" stroke="#f21cf2" shape-rendering="auto" stroke-width="0.9"/><path d="M1131.8,511.6 l-3.3,9.5 h2.4 v3 h1.8 v-3 h2.4 z" fill="#10dc10" stroke="#f21cf2" shape-rendering="auto" stroke-width="0.9"/><path d="M1124.9,514.9 l-3.3,9.5 h2.4 v3 h1.8 v-3 h2.4 z" fill="#10dc10" stroke="#f21cf2" shape-rendering="auto" stroke-width="0.9"/><path d="M1118.0,518.1 l-3.3,9.5 h2.4 v3 h1.8 v-3 h2.4 z" fill="#10dc10" stroke="#f21cf2" shape-rendering="auto" stroke-width="0.9"/><path d="M1111.0,521.4 l-3.3,9.5 h2.4 v3 h1.8 v-3 h2.4 z" fill="#10dc10" stroke="#f21cf2" shape-rendering="auto" stroke-width="0.9"/><path d="M1104.1,524.6 l-3.3,9.5 h2.4 v3 h1.8 v-3 h2.4 z" fill="#10dc10" stroke="#f21cf2" shape-rendering="auto" stroke-width="0.9"/><path d="M1097.2,527.9 l-3.3,9.5 h2.4 v3 h1.8 v-3 h2.4 z" fill="#10dc10" stroke="#f21cf2" shape-rendering="auto" stroke-width="0.9"/><path d="M1145.9,512.6 l-3.3,9.5 h2.4 v3 h1.8 v-3 h2.4 z" fill="#10dc10" stroke="#f21cf2" shape-rendering="auto" stroke-width="0.9"/><path d="M1139.0,515.8 l-3.3,9.5 h2.4 v3 h1.8 v-3 h2.4 z" fill="#10dc10" stroke="#f21cf2" shape-rendering="auto" stroke-width="0.9"/><path d="M1132.1,519.1 l-3.3,9.5 h2.4 v3 h1.8 v-3 h2.4 z" fill="#10dc10" stroke="#f21cf2" shape-rendering="auto" stroke-width="0.9"/><path d="M1125.2,522.3 l-3.3,9.5 h2.4 v3 h1.8 v-3 h2.4 z" fill="#10dc10" stroke="#f21cf2" shape-rendering="auto" stroke-width="0.9"/><path d="M1118.2,525.6 l-3.3,9.5 h2.4 v3 h1.8 v-3 h2.4 z" fill="#10dc10" stroke="#f21cf2" shape-rendering="auto" stroke-width="0.9"/><path d="M1111.3,528.8 l-3.3,9.5 h2.4 v3 h1.8 v-3 h2.4 z" fill="#10dc10" stroke="#f21cf2" shape-rendering="auto" stroke-width="0.9"/><path d="M1104.4,532.1 l-3.3,9.5 h2.4 v3 h1.8 v-3 h2.4 z" fill="#10dc10" stroke="#f21cf2" shape-rendering="auto" stroke-width="0.9"/><path d="M1153.1,516.8 l-3.3,9.5 h2.4 v3 h1.8 v-3 h2.4 z" fill="#10dc10" stroke="#f21cf2" shape-rendering="auto" stroke-width="0.9"/><path d="M1146.2,520.0 l-3.3,9.5 h2.4 v3 h1.8 v-3 h2.4 z" fill="#10dc10" stroke="#f21cf2" shape-rendering="auto" stroke-width="0.9"/><path d="M1139.3,523.3 l-3.3,9.5 h2.4 v3 h1.8 v-3 h2.4 z" fill="#10dc10" stroke="#f21cf2" shape-rendering="auto" stroke-width="0.9"/><path d="M1132.3,526.5 l-3.3,9.5 h2.4 v3 h1.8 v-3 h2.4 z" fill="#10dc10" stroke="#f21cf2" shape-rendering="auto" stroke-width="0.9"/><path d="M1125.4,529.8 l-3.3,9.5 h2.4 v3 h1.8 v-3 h2.4 z" fill="#10dc10" stroke="#f21cf2" shape-rendering="auto" stroke-width="0.9"/><path d="M1118.5,533.0 l-3.3,9.5 h2.4 v3 h1.8 v-3 h2.4 z" fill="#10dc10" stroke="#f21cf2" shape-rendering="auto" stroke-width="0.9"/><path d="M1111.6,536.3 l-3.3,9.5 h2.4 v3 h1.8 v-3 h2.4 z" fill="#10dc10" stroke="#f21cf2" shape-rendering="auto" stroke-width="0.9"/></g></svg>
<div id="dlg" style="left:321px;top:215px;width:271px;height:596px;background:#f0f0f0;border-radius:8px;box-shadow:0 0 0 1px rgba(120,120,120,0.55),0 8px 22px 4px rgba(0,0,0,0.30),0 2px 8px rgba(0,0,0,0.18);overflow:hidden">
<div style="left:0;top:0;width:272px;height:30px;background:#fff"></div>
<span style="left:8.3px;top:8px;font-family:'Liberation Sans',sans-serif;font-size:12px;color:#000;white-space:nowrap;line-height:14px">Buckling Analysis Control</span>
<svg style="left:250.5px;top:9.5px" width="11" height="11" viewBox="0 0 11 11" ><path d="M0.800,0.800 L10.200,10.200 M10.200,0.800 L0.800,10.200" stroke="#111" stroke-width="1.100"/></svg>
<div class="gb" style="left:12px;top:47px;width:250px;height:188px"></div>
<span class="dl gbl" style="left:18.5px;top:41px">Buckling Modes</span>
<span class="dl" style="left:18.5px;top:63px;">Number of Modes</span>
<span class="dl" style="left:127.5px;top:63px;">:</span>
<div style="left:170px;top:58px;width:57px;height:19.500px;background:#fff;border-bottom:2px solid #0067c0;border-radius:3px 3px 0 0"></div>
<div style="left:176px;top:60px;width:6.500px;height:13px;background:#0078d7"></div>
<span class="dl" style="left:176.3px;top:61.8px;color:#fff;-webkit-text-stroke:0">4</span>
<div style="left:227px;top:57px;width:17.500px;height:21px;background:#fdfdfd;border:1px solid #b8b8b8"></div>
<div style="left:228.5px;top:58.5px;width:13.500px;height:8px;background:#f0f0f0;border:1px solid #c8c8c8"></div>
<div style="left:228.5px;top:68px;width:13.500px;height:8px;background:#f0f0f0;border:1px solid #c8c8c8"></div>
<svg style="left:232px;top:60.7px" width="7" height="14" viewBox="0 0 7 14" ><path d="M0.500,4 L3.500,0.800 L6.500,4 Z M0.500,10 L3.500,13.200 L6.500,10 Z" fill="#111"/></svg>
<div class="gb" style="left:21px;top:95px;width:233px;height:109px"></div>
<span class="dl gbl" style="left:27.5px;top:89px">Load Factor Range</span>
<svg style="left:28.2px;top:112.5px" width="16" height="16" viewBox="0 0 16 16" ><circle cx="8" cy="8" r="6.500" fill="#005fb8"/><circle cx="8" cy="8" r="2.900" fill="#fff"/></svg>
<span class="dl" style="left:45.5px;top:115.3px;">Positive Value Only</span>
<svg style="left:28.2px;top:139.4px" width="16" height="16" viewBox="0 0 16 16" ><circle cx="8" cy="8" r="6" fill="#f9f9f9" stroke="#5c5c5c" stroke-width="1"/></svg>
<span class="dl" style="left:45.5px;top:142.2px;">Search</span>
<div class="gb" style="left:96px;top:131px;width:151px;height:64px"></div>
<span class="dl" style="left:101.5px;top:142.2px;">From :</span>
<span class="dl" style="left:101.5px;top:169.2px;">To :</span>
<div style="left:146px;top:139px;width:93.500px;height:19px;background:#f4f4f4;border:1px solid #fbfbfb;box-shadow:0 0 0 0.500px #e4e4e4;border-radius:3px"></div>
<div style="left:146px;top:166px;width:93.500px;height:19px;background:#f4f4f4;border:1px solid #fbfbfb;box-shadow:0 0 0 0.500px #e4e4e4;border-radius:3px"></div>
<span class="dl" style="left:151.5px;top:142.4px;color:#6d6d6d">0</span>
<span class="dl" style="left:151.5px;top:169.4px;color:#6d6d6d">0</span>
<div style="left:19.3px;top:215.2px;width:13px;height:13px;border-radius:3px;background:#f6f6f6;border:1px solid #5c5c5c"></div>
<span class="dl" style="left:34.5px;top:216.6px;">Sturm Sequence Check</span>
<div class="gb" style="left:12px;top:252px;width:250px;height:38px"></div>
<span class="dl gbl" style="left:18.5px;top:246px">Frame Geometric Stiffness Option</span>
<div style="left:19.3px;top:266.3px;width:13px;height:13px;border-radius:3px;background:#f6f6f6;border:1px solid #5c5c5c"></div>
<span class="dl" style="left:34.5px;top:267.3px;">Consider Axial Force Only</span>
<div class="gb" style="left:12px;top:305px;width:250px;height:215px"></div>
<span class="dl gbl" style="left:18.5px;top:299px">Buckling Combination</span>
<span class="dl" style="left:18.5px;top:319.1px;">Load Case :</span>
<div style="left:107.3px;top:315.3px;width:113.500px;height:20.500px;background:#fff;border:1px solid #d2d2d2;border-bottom-color:#8a8a8a;border-radius:3px"></div>
<span class="dl" style="left:111px;top:319.9px;">Pressure</span>
<svg style="left:206.5px;top:322.5px" width="10" height="6" viewBox="0 0 10 6" ><path d="M0.700,0.700 L5,5 L9.300,0.700" fill="none" stroke="#222" stroke-width="1"/></svg>
<div class="btn" style="left:230px;top:316px;width:24px;height:19px;line-height:15px;letter-spacing:0.800px;font-size:12px">...</div>
<span class="dl" style="left:18.5px;top:345.2px;">Scale Factor :</span>
<div style="left:107.3px;top:339.5px;width:113.500px;height:20.500px;background:#fff;border:1px solid #e2e2e2;border-bottom-color:#868686;border-radius:3px"></div>
<span class="dl" style="left:113.5px;top:343.8px;">1</span>
<span class="dl" style="left:18.5px;top:370.2px;">Load Type :</span>
<svg style="left:105.4px;top:367.8px" width="16" height="16" viewBox="0 0 16 16" ><circle cx="8" cy="8" r="6.500" fill="#005fb8"/><circle cx="8" cy="8" r="2.900" fill="#fff"/></svg>
<span class="dl" style="left:122.7px;top:370.2px;">Variable</span>
<svg style="left:180.2px;top:367.8px" width="16" height="16" viewBox="0 0 16 16" ><circle cx="8" cy="8" r="6" fill="#f9f9f9" stroke="#5c5c5c" stroke-width="1"/></svg>
<span class="dl" style="left:197.5px;top:370.2px;">Constant</span>
<div style="left:19.3px;top:390px;width:235px;height:96px;background:#fff;border:1px solid #7a7a7a"></div>
<div style="left:24.5px;top:416px;width:210px;height:17px;background:#f0f0f0"></div>
<div style="left:98.5px;top:392px;width:1px;height:24px;background:#e5e5e5"></div>
<div style="left:156px;top:392px;width:1px;height:24px;background:#e5e5e5"></div>
<div style="left:234px;top:392px;width:1px;height:24px;background:#e5e5e5"></div>
<span class="dl" style="left:19px;top:398.1px;width:80px;text-align:center">Load Case</span>
<span class="dl" style="left:87px;top:398.1px;width:80px;text-align:center">Scale</span>
<span class="dl" style="left:155px;top:398.1px;width:80px;text-align:center">Load Type</span>
<span class="dl" style="left:20.5px;top:418.9px;width:80px;text-align:center">Pressure</span>
<span class="dl" style="left:87.5px;top:418.9px;width:80px;text-align:center">1</span>
<span class="dl" style="left:155px;top:418.9px;width:80px;text-align:center">Variable</span>
<div class="btn" style="left:20px;top:493px;width:68px;height:19px;line-height:18.5px">Add</div>
<div class="btn" style="left:101px;top:493px;width:68px;height:19px;line-height:18.5px">Modify</div>
<div class="btn" style="left:181px;top:493px;width:68px;height:19px;line-height:18.5px">Delete</div>
<div class="btn" style="left:13px;top:529px;width:248px;height:19px;line-height:18.5px">Remove Buckling Analysis Data</div>
<div class="btn" style="left:89px;top:561px;width:76px;height:19px;line-height:18.5px">OK</div>
<div class="btn" style="left:185px;top:561px;width:76px;height:19px;line-height:18.5px">Cancel</div>
</div>
</div></body></html>
